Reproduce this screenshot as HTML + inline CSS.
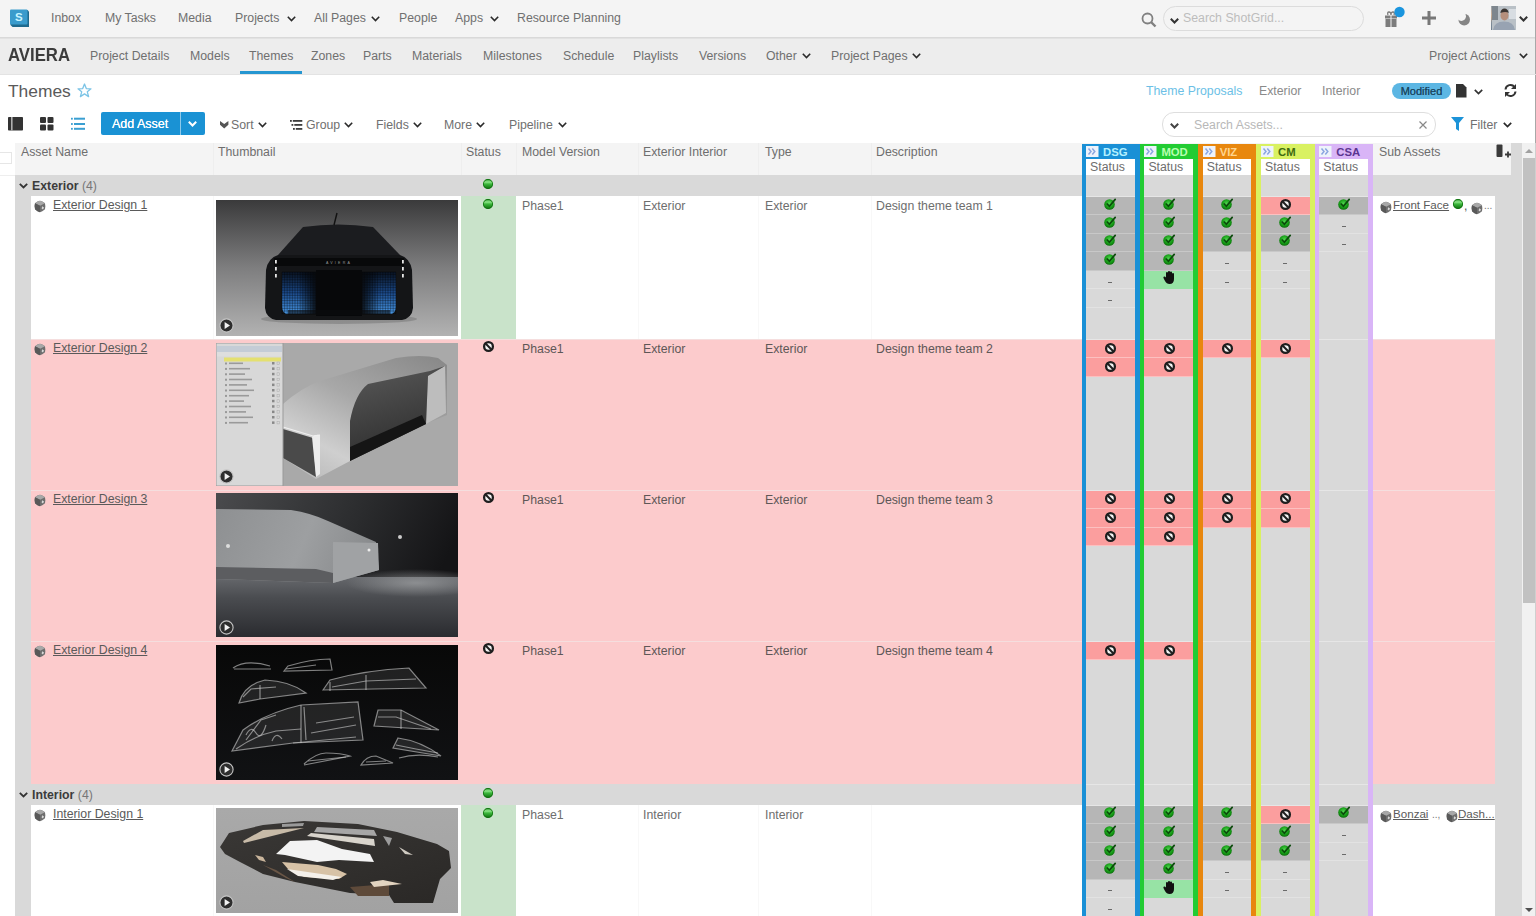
<!DOCTYPE html><html><head><meta charset="utf-8"><style>
*{box-sizing:border-box;margin:0;padding:0}
html,body{width:1536px;height:916px;overflow:hidden;background:#fff;font-family:"Liberation Sans",sans-serif;font-size:12.3px;color:#6e6e6e}
.a{position:absolute}
.t{position:absolute;white-space:nowrap;line-height:14px}
.chev{position:absolute;width:5px;height:5px;border-right:2px solid #2a2a2a;border-bottom:2px solid #2a2a2a;transform:rotate(45deg)}
.u{text-decoration:underline;text-underline-offset:1px}
svg{position:absolute;overflow:visible}
</style></head><body>
<div class="a" style="left:0px;top:0px;width:1536px;height:37px;background:#f4f4f4;"></div>
<div class="a" style="left:0px;top:37px;width:1536px;height:1px;background:#d9d9d9;"></div>
<div class="a" style="left:0px;top:38px;width:1536px;height:1px;background:#e2e2e2;"></div>
<svg style="left:9px;top:8px" width="21" height="20"><path d="M2 2 H18.5 L20 3.5 V19 H3.5 L1.5 17 Z" fill="#1f6a8e"/><rect x="1" y="1.5" width="17.5" height="15" rx="1" fill="#3a9bcc"/><text x="9.8" y="13.2" font-family="Liberation Sans" font-weight="bold" font-size="11.5" fill="#c8f4ff" text-anchor="middle">S</text></svg>
<div class="t" style="left:51px;top:11px;color:#707070;">Inbox</div>
<div class="t" style="left:105px;top:11px;color:#707070;">My Tasks</div>
<div class="t" style="left:178px;top:11px;color:#707070;">Media</div>
<div class="t" style="left:235px;top:11px;color:#707070;">Projects</div>
<div class="t" style="left:314px;top:11px;color:#707070;">All Pages</div>
<div class="t" style="left:399px;top:11px;color:#707070;">People</div>
<div class="t" style="left:455px;top:11px;color:#707070;">Apps</div>
<div class="t" style="left:517px;top:11px;color:#707070;">Resource Planning</div>
<svg style="left:287px;top:15.5px" width="9" height="6"><polyline points="0.8,0.8 4.5,4.5 8.2,0.8" fill="none" stroke="#2a2a2a" stroke-width="1.6"/></svg>
<svg style="left:371px;top:15.5px" width="9" height="6"><polyline points="0.8,0.8 4.5,4.5 8.2,0.8" fill="none" stroke="#2a2a2a" stroke-width="1.6"/></svg>
<svg style="left:490px;top:15.5px" width="9" height="6"><polyline points="0.8,0.8 4.5,4.5 8.2,0.8" fill="none" stroke="#2a2a2a" stroke-width="1.6"/></svg>
<svg style="left:1141px;top:12px" width="17" height="16"><circle cx="6.5" cy="6.5" r="5" fill="none" stroke="#808080" stroke-width="1.8"/><line x1="10" y1="10" x2="14.5" y2="14.5" stroke="#808080" stroke-width="2.4"/></svg>
<div class="a" style="left:1163px;top:6px;width:201px;height:25px;background:transparent;border:1px solid #dcdcdc;border-radius:13px"></div>
<svg style="left:1170px;top:17.5px" width="9" height="6"><polyline points="0.8,0.8 4.5,4.5 8.2,0.8" fill="none" stroke="#333" stroke-width="2"/></svg>
<div class="t" style="left:1183px;top:11px;color:#bdbdbd;">Search ShotGrid...</div>
<svg style="left:1384px;top:5px" width="22" height="22"><rect x="1.5" y="14" width="5" height="8" fill="#7c7c7c"/><rect x="7.5" y="14" width="5" height="8" fill="#7c7c7c"/><rect x="1" y="10.5" width="5.5" height="3" fill="#7c7c7c"/><rect x="7.5" y="10.5" width="5.5" height="3" fill="#7c7c7c"/><path d="M4 10 Q3 7 5 7 Q7 7 7 10 Q7 7 9 7 Q11 7 10 10" fill="none" stroke="#7c7c7c" stroke-width="1.3"/><circle cx="15.5" cy="7" r="5.2" fill="#1b95de"/></svg>
<svg style="left:1422px;top:11px" width="16" height="16"><rect x="5.5" y="0" width="3" height="14" fill="#777"/><rect x="0" y="5.5" width="14" height="3" fill="#777"/></svg>
<svg style="left:1457px;top:12px" width="16" height="16"><defs><mask id="moonm"><rect width="16" height="16" fill="#fff"/><circle cx="4.3" cy="4.2" r="4.7" fill="#000"/></mask></defs><circle cx="7.2" cy="7.6" r="5.8" fill="#858585" mask="url(#moonm)"/></svg>
<div class="a" style="left:1491px;top:6px;width:24px;height:24px;background:linear-gradient(180deg,#9aa3ab 0%,#c7b09a 35%,#b9a08a 50%,#7d8b98 70%,#6f7f8f 100%)"></div>
<svg style="left:1492px;top:6px" width="24" height="24"><rect x="0" y="0" width="24" height="24" fill="#b9c0c6"/><rect x="0" y="0" width="6" height="14" fill="#7d868e"/><rect x="17" y="3" width="7" height="10" fill="#d8dde2"/><ellipse cx="12.5" cy="9.5" rx="4" ry="5" fill="#b58f7c"/><path d="M8.3 7 Q9 2.5 12.5 2.5 Q16 2.5 16.7 7 Q14 5 8.3 7 Z" fill="#3b3532"/><path d="M1 24 Q2 15.5 12 15.5 Q22 15.5 23 24 Z" fill="#98a3b2"/></svg>
<svg style="left:1519px;top:15.5px" width="9" height="6"><polyline points="0.8,0.8 4.5,4.5 8.2,0.8" fill="none" stroke="#333" stroke-width="2"/></svg>
<div class="a" style="left:0px;top:39px;width:1536px;height:36px;background:#ededed;"></div>
<div class="a" style="left:1535px;top:0px;width:1px;height:143px;background:#a8a8a8;"></div>
<div class="a" style="left:0px;top:74px;width:1536px;height:1px;background:#e3e3e3;"></div>
<div class="t" style="left:8px;top:45px;font-size:18px;line-height:20px;font-weight:bold;color:#3c3c3c;transform:scaleX(0.93);transform-origin:0 0">AVIERA</div>
<div class="t" style="left:90px;top:49px;color:#707070;">Project Details</div>
<div class="t" style="left:190px;top:49px;color:#707070;">Models</div>
<div class="t" style="left:249px;top:49px;color:#707070;">Themes</div>
<div class="t" style="left:311px;top:49px;color:#707070;">Zones</div>
<div class="t" style="left:363px;top:49px;color:#707070;">Parts</div>
<div class="t" style="left:412px;top:49px;color:#707070;">Materials</div>
<div class="t" style="left:483px;top:49px;color:#707070;">Milestones</div>
<div class="t" style="left:563px;top:49px;color:#707070;">Schedule</div>
<div class="t" style="left:633px;top:49px;color:#707070;">Playlists</div>
<div class="t" style="left:699px;top:49px;color:#707070;">Versions</div>
<div class="t" style="left:766px;top:49px;color:#707070;">Other</div>
<div class="t" style="left:831px;top:49px;color:#707070;">Project Pages</div>
<div class="t" style="left:1429px;top:49px;color:#707070;">Project Actions</div>
<svg style="left:802px;top:52.5px" width="9" height="6"><polyline points="0.8,0.8 4.5,4.5 8.2,0.8" fill="none" stroke="#2a2a2a" stroke-width="1.6"/></svg>
<svg style="left:912px;top:52.5px" width="9" height="6"><polyline points="0.8,0.8 4.5,4.5 8.2,0.8" fill="none" stroke="#2a2a2a" stroke-width="1.6"/></svg>
<svg style="left:1519px;top:52.5px" width="9" height="6"><polyline points="0.8,0.8 4.5,4.5 8.2,0.8" fill="none" stroke="#2a2a2a" stroke-width="1.6"/></svg>
<div class="a" style="left:240px;top:71px;width:62px;height:3px;background:#2596d1;"></div>
<div class="t" style="left:8px;top:81px;color:#5a5a5a;font-size:17.4px;line-height:20px">Themes</div>
<svg style="left:77px;top:83px" width="15" height="15"><path d="M7.5 1 L9.3 5.6 L14 5.8 L10.3 8.8 L11.6 13.6 L7.5 10.9 L3.4 13.6 L4.7 8.8 L1 5.8 L5.7 5.6 Z" fill="none" stroke="#7cc4e6" stroke-width="1.3" stroke-linejoin="round"/></svg>
<div class="t" style="left:1146px;top:84px;color:#6cbfe6;">Theme Proposals</div>
<div class="t" style="left:1259px;top:84px;color:#8a8a8a;">Exterior</div>
<div class="t" style="left:1322px;top:84px;color:#8a8a8a;">Interior</div>
<div class="a" style="left:1392px;top:83px;width:59px;height:16px;background:#5cb6e3;border-radius:8px;color:#1d4a63;font-size:11px;line-height:16px;text-align:center;text-shadow:0 0 0.4px #1d4a63">Modified</div>
<svg style="left:1456px;top:84px" width="11" height="14"><path d="M0 0 H7 L10.5 3.5 V13.5 H0 Z" fill="#333"/></svg>
<svg style="left:1474px;top:88.5px" width="9" height="6"><polyline points="0.8,0.8 4.5,4.5 8.2,0.8" fill="none" stroke="#333" stroke-width="1.7"/></svg>
<svg style="left:1503px;top:83px" width="15" height="15"><path d="M2.5 6.5 A5 5 0 0 1 11.5 4" fill="none" stroke="#333" stroke-width="2"/><path d="M13 1 V6 H8 Z" fill="#333"/><path d="M12.5 8.5 A5 5 0 0 1 3.5 11" fill="none" stroke="#333" stroke-width="2"/><path d="M2 14 V9 H7 Z" fill="#333"/></svg>
<svg style="left:8px;top:117px" width="16" height="14"><rect x="0" y="0" width="15" height="13.5" rx="0.8" fill="#333"/><rect x="3" y="0" width="1.6" height="13.5" fill="#b0b0b0"/></svg>
<svg style="left:40px;top:117px" width="14" height="14"><rect x="0" y="0" width="6" height="6" rx="1" fill="#333"/><rect x="7.5" y="0" width="6" height="6" rx="1" fill="#333"/><rect x="0" y="7.5" width="6" height="6" rx="1" fill="#333"/><rect x="7.5" y="7.5" width="6" height="6" rx="1" fill="#333"/></svg>
<svg style="left:71px;top:117px" width="15" height="14"><g fill="#3a9fd2"><rect x="0" y="0.8" width="1.8" height="1.8"/><rect x="3" y="0.7" width="11" height="2"/><rect x="0" y="6.1" width="1.8" height="1.8"/><rect x="3" y="6" width="11" height="2"/><rect x="0" y="10.9" width="1.8" height="1.8"/><rect x="3" y="10.8" width="11" height="2"/></g></svg>
<div class="a" style="left:101px;top:112px;width:104px;height:23px;background:#1a92d4;border-radius:2px"></div>
<div class="a" style="left:180px;top:112px;width:1px;height:23px;background:#ffffff80;"></div>
<div class="t" style="left:112px;top:117px;color:#fff;font-size:12.5px;text-shadow:0 0 0.4px #fff">Add Asset</div>
<svg style="left:188px;top:120.5px" width="9" height="6"><polyline points="0.8,0.8 4.5,4.5 8.2,0.8" fill="none" stroke="#fff" stroke-width="2"/></svg>
<svg style="left:219.5px;top:121px" width="9" height="9"><path d="M0 0 L4.2 3 L8.4 0 L8.4 3.8 L4.2 7.6 L0 3.8 Z" fill="#555"/></svg>
<div class="t" style="left:231px;top:118px;color:#707070;">Sort</div>
<svg style="left:258px;top:121.5px" width="9" height="6"><polyline points="0.8,0.8 4.5,4.5 8.2,0.8" fill="none" stroke="#2a2a2a" stroke-width="1.6"/></svg>
<svg style="left:290px;top:120px" width="13" height="11"><g fill="#3c3c3c"><rect x="0" y="0" width="1.8" height="1.8"/><rect x="2.8" y="0" width="9.5" height="1.8"/><rect x="1.5" y="4" width="1.8" height="1.8"/><rect x="4.3" y="4" width="8" height="1.8"/><rect x="3" y="8" width="1.8" height="1.8"/><rect x="5.8" y="8" width="6.5" height="1.8"/></g></svg>
<div class="t" style="left:306px;top:118px;color:#707070;">Group</div>
<svg style="left:344px;top:121.5px" width="9" height="6"><polyline points="0.8,0.8 4.5,4.5 8.2,0.8" fill="none" stroke="#2a2a2a" stroke-width="1.6"/></svg>
<div class="t" style="left:376px;top:118px;color:#707070;">Fields</div>
<svg style="left:413px;top:121.5px" width="9" height="6"><polyline points="0.8,0.8 4.5,4.5 8.2,0.8" fill="none" stroke="#2a2a2a" stroke-width="1.6"/></svg>
<div class="t" style="left:444px;top:118px;color:#707070;">More</div>
<svg style="left:476px;top:121.5px" width="9" height="6"><polyline points="0.8,0.8 4.5,4.5 8.2,0.8" fill="none" stroke="#2a2a2a" stroke-width="1.6"/></svg>
<div class="t" style="left:509px;top:118px;color:#707070;">Pipeline</div>
<svg style="left:558px;top:121.5px" width="9" height="6"><polyline points="0.8,0.8 4.5,4.5 8.2,0.8" fill="none" stroke="#2a2a2a" stroke-width="1.6"/></svg>
<div class="a" style="left:1162px;top:112px;width:274px;height:25px;background:transparent;border:1px solid #dedede;border-radius:12px"></div>
<svg style="left:1170px;top:122.5px" width="9" height="6"><polyline points="0.8,0.8 4.5,4.5 8.2,0.8" fill="none" stroke="#444" stroke-width="2"/></svg>
<div class="t" style="left:1194px;top:118px;color:#b8b8b8;">Search Assets...</div>
<svg style="left:1419px;top:121px" width="8" height="8"><path d="M0.5 0.5 L7.5 7.5 M7.5 0.5 L0.5 7.5" stroke="#888" stroke-width="1.2"/></svg>
<svg style="left:1451px;top:117px" width="13" height="15"><path d="M0 0 H13 L8 6 V14 L5 12 V6 Z" fill="#1c93d8"/></svg>
<div class="t" style="left:1470px;top:118px;color:#707070;">Filter</div>
<svg style="left:1503px;top:121.5px" width="9" height="6"><polyline points="0.8,0.8 4.5,4.5 8.2,0.8" fill="none" stroke="#2a2a2a" stroke-width="1.7"/></svg>
<div class="a" style="left:0px;top:152px;width:12px;height:12px;background:transparent;border:1px solid #e6e6e6;border-left:none"></div>
<div class="a" style="left:0px;top:175px;width:15px;height:1px;background:#eeeeee;"></div>
<div class="a" style="left:15px;top:143px;width:1496px;height:32px;background:#f4f4f4;"></div>
<div class="a" style="left:213px;top:143px;width:1px;height:32px;background:#eeeeee;"></div>
<div class="a" style="left:461px;top:143px;width:1px;height:32px;background:#eeeeee;"></div>
<div class="a" style="left:516px;top:143px;width:1px;height:32px;background:#eeeeee;"></div>
<div class="a" style="left:638px;top:143px;width:1px;height:32px;background:#eeeeee;"></div>
<div class="a" style="left:758px;top:143px;width:1px;height:32px;background:#eeeeee;"></div>
<div class="a" style="left:871px;top:143px;width:1px;height:32px;background:#eeeeee;"></div>
<div class="t" style="left:21px;top:145px;color:#6e6e6e;">Asset Name</div>
<div class="t" style="left:218px;top:145px;color:#6e6e6e;">Thumbnail</div>
<div class="t" style="left:466px;top:145px;color:#6e6e6e;">Status</div>
<div class="t" style="left:522px;top:145px;color:#6e6e6e;">Model Version</div>
<div class="t" style="left:643px;top:145px;color:#6e6e6e;">Exterior Interior</div>
<div class="t" style="left:765px;top:145px;color:#6e6e6e;">Type</div>
<div class="t" style="left:876px;top:145px;color:#6e6e6e;">Description</div>
<div class="t" style="left:1379px;top:145px;color:#6e6e6e;">Sub Assets</div>
<svg style="left:1496px;top:144px" width="16" height="16"><rect x="0.5" y="0.5" width="6" height="12.5" rx="1" fill="#3a3a3a"/><path d="M9 10.5 H15 M12 7.5 V13.5" stroke="#3a3a3a" stroke-width="1.8"/></svg>
<div class="a" style="left:1511px;top:143px;width:11px;height:773px;background:#d9d9d9;"></div>
<div class="a" style="left:1495px;top:175px;width:16px;height:741px;background:#d9d9d9;"></div>
<div class="a" style="left:1522px;top:143px;width:14px;height:773px;background:#f1f1f1;"></div>
<div class="a" style="left:1523px;top:158px;width:12px;height:445px;background:#c1c1c1;"></div>
<div class="a" style="left:1535px;top:143px;width:1px;height:773px;background:#cfcfcf;"></div>
<svg style="left:1524px;top:147px" width="10" height="8"><path d="M1 6 L5 2 L9 6 Z" fill="#a0a0a0"/></svg>
<svg style="left:1524px;top:906px" width="10" height="8"><path d="M1 2 L5 6 L9 2 Z" fill="#505050"/></svg>
<div class="a" style="left:15px;top:175px;width:16px;height:741px;background:#d9d9d9;"></div>
<div class="a" style="left:15px;top:175px;width:1067px;height:21px;background:#d9d9d9;"></div>
<svg style="left:19px;top:182.5px" width="9" height="6"><polyline points="0.8,0.8 4.5,4.5 8.2,0.8" fill="none" stroke="#333" stroke-width="1.8"/></svg>
<div class="t" style="left:32px;top:179px;color:#3c3c3c"><b>Exterior</b> <span style="color:#777">(4)</span></div>
<svg style="left:482px;top:178px" width="12" height="12"><defs><linearGradient id="gd" x1="0" y1="0" x2="0" y2="1"><stop offset="0" stop-color="#1f8a1f"/><stop offset="0.3" stop-color="#8fe68a"/><stop offset="0.5" stop-color="#3cb83c"/><stop offset="1" stop-color="#0b6a0b"/></linearGradient></defs><circle cx="6" cy="6" r="5" fill="url(#gd)"/><circle cx="6" cy="6" r="4.6" fill="none" stroke="#0e6e0e" stroke-width="0.8"/></svg>
<div class="a" style="left:1373px;top:175px;width:138px;height:21px;background:#d9d9d9;"></div>
<div class="a" style="left:15px;top:784px;width:1067px;height:21px;background:#d9d9d9;"></div>
<svg style="left:19px;top:791.5px" width="9" height="6"><polyline points="0.8,0.8 4.5,4.5 8.2,0.8" fill="none" stroke="#333" stroke-width="1.8"/></svg>
<div class="t" style="left:32px;top:788px;color:#3c3c3c"><b>Interior</b> <span style="color:#777">(4)</span></div>
<svg style="left:482px;top:787px" width="12" height="12"><defs><linearGradient id="gd" x1="0" y1="0" x2="0" y2="1"><stop offset="0" stop-color="#1f8a1f"/><stop offset="0.3" stop-color="#8fe68a"/><stop offset="0.5" stop-color="#3cb83c"/><stop offset="1" stop-color="#0b6a0b"/></linearGradient></defs><circle cx="6" cy="6" r="5" fill="url(#gd)"/><circle cx="6" cy="6" r="4.6" fill="none" stroke="#0e6e0e" stroke-width="0.8"/></svg>
<div class="a" style="left:1373px;top:784px;width:138px;height:21px;background:#d9d9d9;"></div>
<div class="a" style="left:31px;top:196px;width:1051px;height:143px;background:#ffffff;"></div>
<div class="a" style="left:1373px;top:196px;width:122px;height:143px;background:#ffffff;"></div>
<div class="a" style="left:213px;top:196px;width:1px;height:143px;background:#f8f8f8;"></div>
<div class="a" style="left:638px;top:196px;width:1px;height:143px;background:#f8f8f8;"></div>
<div class="a" style="left:758px;top:196px;width:1px;height:143px;background:#f8f8f8;"></div>
<div class="a" style="left:871px;top:196px;width:1px;height:143px;background:#f8f8f8;"></div>
<svg style="left:34px;top:200px" width="12" height="13"><path d="M6 0.8 Q8 1 11 3.2 Q11.8 6.5 11 9.3 Q8 11.8 6 12.2 Q3.5 11.8 1 9.3 Q0.2 6.5 1 3.2 Q3.5 1 6 0.8 Z" fill="#6e6e6e"/><path d="M6 0.8 Q8 1 11 3.2 L6 5.8 L1 3.2 Q3.5 1 6 0.8 Z" fill="#a8a8a8"/><path d="M6 5.8 L1 3.2 Q0.2 6.5 1 9.3 Q3.5 11.8 6 12.2 Z" fill="#595959"/><path d="M8.2 6.3 L10 7.5 L9 9.5 L7.6 8.6 Z" fill="#d9d9d9"/></svg>
<div class="t u" style="left:53px;top:198px;color:#5a5a5a">Exterior Design 1</div>
<div class="a" style="left:461px;top:196px;width:55px;height:143px;background:#c9e3ca;"></div>
<svg style="left:482px;top:198px" width="12" height="12"><defs><linearGradient id="gd" x1="0" y1="0" x2="0" y2="1"><stop offset="0" stop-color="#1f8a1f"/><stop offset="0.3" stop-color="#8fe68a"/><stop offset="0.5" stop-color="#3cb83c"/><stop offset="1" stop-color="#0b6a0b"/></linearGradient></defs><circle cx="6" cy="6" r="5" fill="url(#gd)"/><circle cx="6" cy="6" r="4.6" fill="none" stroke="#0e6e0e" stroke-width="0.8"/></svg>
<div class="t" style="left:522px;top:198.5px;color:#6e6e6e;">Phase1</div>
<div class="t" style="left:643px;top:198.5px;color:#6e6e6e;">Exterior</div>
<div class="t" style="left:765px;top:198.5px;color:#6e6e6e;">Exterior</div>
<div class="t" style="left:876px;top:198.5px;color:#6e6e6e;">Design theme team 1</div>
<div class="a" style="left:31px;top:339px;width:1051px;height:151px;background:#fccbcc;"></div>
<div class="a" style="left:1373px;top:339px;width:122px;height:151px;background:#fccbcc;"></div>
<div class="a" style="left:31px;top:339px;width:1051px;height:1px;background:#f5dede;"></div>
<div class="a" style="left:1373px;top:339px;width:122px;height:1px;background:#f5dede;"></div>
<svg style="left:34px;top:343px" width="12" height="13"><path d="M6 0.8 Q8 1 11 3.2 Q11.8 6.5 11 9.3 Q8 11.8 6 12.2 Q3.5 11.8 1 9.3 Q0.2 6.5 1 3.2 Q3.5 1 6 0.8 Z" fill="#6e6e6e"/><path d="M6 0.8 Q8 1 11 3.2 L6 5.8 L1 3.2 Q3.5 1 6 0.8 Z" fill="#a8a8a8"/><path d="M6 5.8 L1 3.2 Q0.2 6.5 1 9.3 Q3.5 11.8 6 12.2 Z" fill="#595959"/><path d="M8.2 6.3 L10 7.5 L9 9.5 L7.6 8.6 Z" fill="#d9d9d9"/></svg>
<div class="t u" style="left:53px;top:341px;color:#5a5a5a">Exterior Design 2</div>
<svg style="left:481.5px;top:339.5px" width="13.0" height="13.0"><circle cx="6.5" cy="6.5" r="4.4" fill="#f4f4f4" stroke="#1e1e1e" stroke-width="2.3"/><line x1="3.3" y1="3.3" x2="9.7" y2="9.7" stroke="#1e1e1e" stroke-width="2"/></svg>
<div class="t" style="left:522px;top:341.5px;color:#5e5757;">Phase1</div>
<div class="t" style="left:643px;top:341.5px;color:#5e5757;">Exterior</div>
<div class="t" style="left:765px;top:341.5px;color:#5e5757;">Exterior</div>
<div class="t" style="left:876px;top:341.5px;color:#5e5757;">Design theme team 2</div>
<div class="a" style="left:31px;top:490px;width:1051px;height:151px;background:#fccbcc;"></div>
<div class="a" style="left:1373px;top:490px;width:122px;height:151px;background:#fccbcc;"></div>
<div class="a" style="left:31px;top:490px;width:1051px;height:1px;background:#f5dede;"></div>
<div class="a" style="left:1373px;top:490px;width:122px;height:1px;background:#f5dede;"></div>
<svg style="left:34px;top:494px" width="12" height="13"><path d="M6 0.8 Q8 1 11 3.2 Q11.8 6.5 11 9.3 Q8 11.8 6 12.2 Q3.5 11.8 1 9.3 Q0.2 6.5 1 3.2 Q3.5 1 6 0.8 Z" fill="#6e6e6e"/><path d="M6 0.8 Q8 1 11 3.2 L6 5.8 L1 3.2 Q3.5 1 6 0.8 Z" fill="#a8a8a8"/><path d="M6 5.8 L1 3.2 Q0.2 6.5 1 9.3 Q3.5 11.8 6 12.2 Z" fill="#595959"/><path d="M8.2 6.3 L10 7.5 L9 9.5 L7.6 8.6 Z" fill="#d9d9d9"/></svg>
<div class="t u" style="left:53px;top:492px;color:#5a5a5a">Exterior Design 3</div>
<svg style="left:481.5px;top:490.5px" width="13.0" height="13.0"><circle cx="6.5" cy="6.5" r="4.4" fill="#f4f4f4" stroke="#1e1e1e" stroke-width="2.3"/><line x1="3.3" y1="3.3" x2="9.7" y2="9.7" stroke="#1e1e1e" stroke-width="2"/></svg>
<div class="t" style="left:522px;top:492.5px;color:#5e5757;">Phase1</div>
<div class="t" style="left:643px;top:492.5px;color:#5e5757;">Exterior</div>
<div class="t" style="left:765px;top:492.5px;color:#5e5757;">Exterior</div>
<div class="t" style="left:876px;top:492.5px;color:#5e5757;">Design theme team 3</div>
<div class="a" style="left:31px;top:641px;width:1051px;height:143px;background:#fccbcc;"></div>
<div class="a" style="left:1373px;top:641px;width:122px;height:143px;background:#fccbcc;"></div>
<div class="a" style="left:31px;top:641px;width:1051px;height:1px;background:#f5dede;"></div>
<div class="a" style="left:1373px;top:641px;width:122px;height:1px;background:#f5dede;"></div>
<svg style="left:34px;top:645px" width="12" height="13"><path d="M6 0.8 Q8 1 11 3.2 Q11.8 6.5 11 9.3 Q8 11.8 6 12.2 Q3.5 11.8 1 9.3 Q0.2 6.5 1 3.2 Q3.5 1 6 0.8 Z" fill="#6e6e6e"/><path d="M6 0.8 Q8 1 11 3.2 L6 5.8 L1 3.2 Q3.5 1 6 0.8 Z" fill="#a8a8a8"/><path d="M6 5.8 L1 3.2 Q0.2 6.5 1 9.3 Q3.5 11.8 6 12.2 Z" fill="#595959"/><path d="M8.2 6.3 L10 7.5 L9 9.5 L7.6 8.6 Z" fill="#d9d9d9"/></svg>
<div class="t u" style="left:53px;top:643px;color:#5a5a5a">Exterior Design 4</div>
<svg style="left:481.5px;top:641.5px" width="13.0" height="13.0"><circle cx="6.5" cy="6.5" r="4.4" fill="#f4f4f4" stroke="#1e1e1e" stroke-width="2.3"/><line x1="3.3" y1="3.3" x2="9.7" y2="9.7" stroke="#1e1e1e" stroke-width="2"/></svg>
<div class="t" style="left:522px;top:643.5px;color:#5e5757;">Phase1</div>
<div class="t" style="left:643px;top:643.5px;color:#5e5757;">Exterior</div>
<div class="t" style="left:765px;top:643.5px;color:#5e5757;">Exterior</div>
<div class="t" style="left:876px;top:643.5px;color:#5e5757;">Design theme team 4</div>
<div class="a" style="left:31px;top:805px;width:1051px;height:111px;background:#ffffff;"></div>
<div class="a" style="left:1373px;top:805px;width:122px;height:111px;background:#ffffff;"></div>
<div class="a" style="left:213px;top:805px;width:1px;height:111px;background:#f8f8f8;"></div>
<div class="a" style="left:638px;top:805px;width:1px;height:111px;background:#f8f8f8;"></div>
<div class="a" style="left:758px;top:805px;width:1px;height:111px;background:#f8f8f8;"></div>
<div class="a" style="left:871px;top:805px;width:1px;height:111px;background:#f8f8f8;"></div>
<svg style="left:34px;top:809px" width="12" height="13"><path d="M6 0.8 Q8 1 11 3.2 Q11.8 6.5 11 9.3 Q8 11.8 6 12.2 Q3.5 11.8 1 9.3 Q0.2 6.5 1 3.2 Q3.5 1 6 0.8 Z" fill="#6e6e6e"/><path d="M6 0.8 Q8 1 11 3.2 L6 5.8 L1 3.2 Q3.5 1 6 0.8 Z" fill="#a8a8a8"/><path d="M6 5.8 L1 3.2 Q0.2 6.5 1 9.3 Q3.5 11.8 6 12.2 Z" fill="#595959"/><path d="M8.2 6.3 L10 7.5 L9 9.5 L7.6 8.6 Z" fill="#d9d9d9"/></svg>
<div class="t u" style="left:53px;top:807px;color:#5a5a5a">Interior Design 1</div>
<div class="a" style="left:461px;top:805px;width:55px;height:111px;background:#c9e3ca;"></div>
<svg style="left:482px;top:807px" width="12" height="12"><defs><linearGradient id="gd" x1="0" y1="0" x2="0" y2="1"><stop offset="0" stop-color="#1f8a1f"/><stop offset="0.3" stop-color="#8fe68a"/><stop offset="0.5" stop-color="#3cb83c"/><stop offset="1" stop-color="#0b6a0b"/></linearGradient></defs><circle cx="6" cy="6" r="5" fill="url(#gd)"/><circle cx="6" cy="6" r="4.6" fill="none" stroke="#0e6e0e" stroke-width="0.8"/></svg>
<div class="t" style="left:522px;top:807.5px;color:#6e6e6e;">Phase1</div>
<div class="t" style="left:643px;top:807.5px;color:#6e6e6e;">Interior</div>
<div class="t" style="left:765px;top:807.5px;color:#6e6e6e;">Interior</div>
<svg style="left:216px;top:200px;overflow:hidden" width="242" height="136" viewBox="0 0 242 136"><defs>
<linearGradient id="t1bg" x1="0" y1="0" x2="0" y2="1"><stop offset="0" stop-color="#3a3a3b"/><stop offset="0.5" stop-color="#7e7e7f"/><stop offset="1" stop-color="#b2b2b2"/></linearGradient>
<linearGradient id="blueV" x1="0" y1="0" x2="0" y2="1"><stop offset="0" stop-color="#0a1322"/><stop offset="0.5" stop-color="#1c4c8e"/><stop offset="1" stop-color="#4a9ae8"/></linearGradient>
<linearGradient id="fadeL" x1="0" y1="0" x2="1" y2="0"><stop offset="0" stop-color="#000" stop-opacity="0"/><stop offset="1" stop-color="#07080a" stop-opacity="0.9"/></linearGradient>
<linearGradient id="fadeR" x1="1" y1="0" x2="0" y2="0"><stop offset="0" stop-color="#000" stop-opacity="0"/><stop offset="1" stop-color="#07080a" stop-opacity="0.9"/></linearGradient>
</defs>
<rect width="242" height="136" fill="url(#t1bg)"/>
<ellipse cx="123" cy="119" rx="78" ry="5" fill="#2a2a2a" opacity="0.2"/>
<path d="M87 27 Q122 22 157 27 L184 55 L62 55 Z" fill="#1b1c1f"/>
<path d="M62 55 L184 55 Q194 58 196 70 L197 108 Q196 118 186 120 L60 120 Q50 118 49 108 L50 70 Q52 58 62 55 Z" fill="#141517"/>
<rect x="58" y="58" width="130" height="8" fill="#08090a"/>
<path d="M66 72 L100 72 L100 114 L70 114 Q66 112 66 106 Z" fill="url(#blueV)"/>
<path d="M180 72 L146 72 L146 114 L176 114 Q180 112 180 106 Z" fill="url(#blueV)"/>
<line x1="66.0" y1="72" x2="66.0" y2="114" stroke="#000" stroke-opacity="0.45" stroke-width="0.7"/><line x1="68.6" y1="72" x2="68.6" y2="114" stroke="#000" stroke-opacity="0.45" stroke-width="0.7"/><line x1="71.2" y1="72" x2="71.2" y2="114" stroke="#000" stroke-opacity="0.45" stroke-width="0.7"/><line x1="73.8" y1="72" x2="73.8" y2="114" stroke="#000" stroke-opacity="0.45" stroke-width="0.7"/><line x1="76.4" y1="72" x2="76.4" y2="114" stroke="#000" stroke-opacity="0.45" stroke-width="0.7"/><line x1="79.0" y1="72" x2="79.0" y2="114" stroke="#000" stroke-opacity="0.45" stroke-width="0.7"/><line x1="81.6" y1="72" x2="81.6" y2="114" stroke="#000" stroke-opacity="0.45" stroke-width="0.7"/><line x1="84.2" y1="72" x2="84.2" y2="114" stroke="#000" stroke-opacity="0.45" stroke-width="0.7"/><line x1="86.8" y1="72" x2="86.8" y2="114" stroke="#000" stroke-opacity="0.45" stroke-width="0.7"/><line x1="89.4" y1="72" x2="89.4" y2="114" stroke="#000" stroke-opacity="0.45" stroke-width="0.7"/><line x1="92.0" y1="72" x2="92.0" y2="114" stroke="#000" stroke-opacity="0.45" stroke-width="0.7"/><line x1="94.6" y1="72" x2="94.6" y2="114" stroke="#000" stroke-opacity="0.45" stroke-width="0.7"/><line x1="97.2" y1="72" x2="97.2" y2="114" stroke="#000" stroke-opacity="0.45" stroke-width="0.7"/><line x1="99.8" y1="72" x2="99.8" y2="114" stroke="#000" stroke-opacity="0.45" stroke-width="0.7"/><line x1="66" y1="72.0" x2="100" y2="72.0" stroke="#000" stroke-opacity="0.45" stroke-width="0.7"/><line x1="66" y1="74.6" x2="100" y2="74.6" stroke="#000" stroke-opacity="0.45" stroke-width="0.7"/><line x1="66" y1="77.2" x2="100" y2="77.2" stroke="#000" stroke-opacity="0.45" stroke-width="0.7"/><line x1="66" y1="79.8" x2="100" y2="79.8" stroke="#000" stroke-opacity="0.45" stroke-width="0.7"/><line x1="66" y1="82.4" x2="100" y2="82.4" stroke="#000" stroke-opacity="0.45" stroke-width="0.7"/><line x1="66" y1="85.0" x2="100" y2="85.0" stroke="#000" stroke-opacity="0.45" stroke-width="0.7"/><line x1="66" y1="87.6" x2="100" y2="87.6" stroke="#000" stroke-opacity="0.45" stroke-width="0.7"/><line x1="66" y1="90.2" x2="100" y2="90.2" stroke="#000" stroke-opacity="0.45" stroke-width="0.7"/><line x1="66" y1="92.8" x2="100" y2="92.8" stroke="#000" stroke-opacity="0.45" stroke-width="0.7"/><line x1="66" y1="95.4" x2="100" y2="95.4" stroke="#000" stroke-opacity="0.45" stroke-width="0.7"/><line x1="66" y1="98.0" x2="100" y2="98.0" stroke="#000" stroke-opacity="0.45" stroke-width="0.7"/><line x1="66" y1="100.6" x2="100" y2="100.6" stroke="#000" stroke-opacity="0.45" stroke-width="0.7"/><line x1="66" y1="103.2" x2="100" y2="103.2" stroke="#000" stroke-opacity="0.45" stroke-width="0.7"/><line x1="66" y1="105.8" x2="100" y2="105.8" stroke="#000" stroke-opacity="0.45" stroke-width="0.7"/><line x1="66" y1="108.4" x2="100" y2="108.4" stroke="#000" stroke-opacity="0.45" stroke-width="0.7"/><line x1="66" y1="111.0" x2="100" y2="111.0" stroke="#000" stroke-opacity="0.45" stroke-width="0.7"/><line x1="66" y1="113.6" x2="100" y2="113.6" stroke="#000" stroke-opacity="0.45" stroke-width="0.7"/><line x1="146.0" y1="72" x2="146.0" y2="114" stroke="#000" stroke-opacity="0.45" stroke-width="0.7"/><line x1="148.6" y1="72" x2="148.6" y2="114" stroke="#000" stroke-opacity="0.45" stroke-width="0.7"/><line x1="151.2" y1="72" x2="151.2" y2="114" stroke="#000" stroke-opacity="0.45" stroke-width="0.7"/><line x1="153.8" y1="72" x2="153.8" y2="114" stroke="#000" stroke-opacity="0.45" stroke-width="0.7"/><line x1="156.4" y1="72" x2="156.4" y2="114" stroke="#000" stroke-opacity="0.45" stroke-width="0.7"/><line x1="159.0" y1="72" x2="159.0" y2="114" stroke="#000" stroke-opacity="0.45" stroke-width="0.7"/><line x1="161.6" y1="72" x2="161.6" y2="114" stroke="#000" stroke-opacity="0.45" stroke-width="0.7"/><line x1="164.2" y1="72" x2="164.2" y2="114" stroke="#000" stroke-opacity="0.45" stroke-width="0.7"/><line x1="166.8" y1="72" x2="166.8" y2="114" stroke="#000" stroke-opacity="0.45" stroke-width="0.7"/><line x1="169.4" y1="72" x2="169.4" y2="114" stroke="#000" stroke-opacity="0.45" stroke-width="0.7"/><line x1="172.0" y1="72" x2="172.0" y2="114" stroke="#000" stroke-opacity="0.45" stroke-width="0.7"/><line x1="174.6" y1="72" x2="174.6" y2="114" stroke="#000" stroke-opacity="0.45" stroke-width="0.7"/><line x1="177.2" y1="72" x2="177.2" y2="114" stroke="#000" stroke-opacity="0.45" stroke-width="0.7"/><line x1="179.8" y1="72" x2="179.8" y2="114" stroke="#000" stroke-opacity="0.45" stroke-width="0.7"/><line x1="146" y1="72.0" x2="180" y2="72.0" stroke="#000" stroke-opacity="0.45" stroke-width="0.7"/><line x1="146" y1="74.6" x2="180" y2="74.6" stroke="#000" stroke-opacity="0.45" stroke-width="0.7"/><line x1="146" y1="77.2" x2="180" y2="77.2" stroke="#000" stroke-opacity="0.45" stroke-width="0.7"/><line x1="146" y1="79.8" x2="180" y2="79.8" stroke="#000" stroke-opacity="0.45" stroke-width="0.7"/><line x1="146" y1="82.4" x2="180" y2="82.4" stroke="#000" stroke-opacity="0.45" stroke-width="0.7"/><line x1="146" y1="85.0" x2="180" y2="85.0" stroke="#000" stroke-opacity="0.45" stroke-width="0.7"/><line x1="146" y1="87.6" x2="180" y2="87.6" stroke="#000" stroke-opacity="0.45" stroke-width="0.7"/><line x1="146" y1="90.2" x2="180" y2="90.2" stroke="#000" stroke-opacity="0.45" stroke-width="0.7"/><line x1="146" y1="92.8" x2="180" y2="92.8" stroke="#000" stroke-opacity="0.45" stroke-width="0.7"/><line x1="146" y1="95.4" x2="180" y2="95.4" stroke="#000" stroke-opacity="0.45" stroke-width="0.7"/><line x1="146" y1="98.0" x2="180" y2="98.0" stroke="#000" stroke-opacity="0.45" stroke-width="0.7"/><line x1="146" y1="100.6" x2="180" y2="100.6" stroke="#000" stroke-opacity="0.45" stroke-width="0.7"/><line x1="146" y1="103.2" x2="180" y2="103.2" stroke="#000" stroke-opacity="0.45" stroke-width="0.7"/><line x1="146" y1="105.8" x2="180" y2="105.8" stroke="#000" stroke-opacity="0.45" stroke-width="0.7"/><line x1="146" y1="108.4" x2="180" y2="108.4" stroke="#000" stroke-opacity="0.45" stroke-width="0.7"/><line x1="146" y1="111.0" x2="180" y2="111.0" stroke="#000" stroke-opacity="0.45" stroke-width="0.7"/><line x1="146" y1="113.6" x2="180" y2="113.6" stroke="#000" stroke-opacity="0.45" stroke-width="0.7"/>
<rect x="82" y="72" width="18" height="42" fill="url(#fadeL)"/>
<rect x="146" y="72" width="18" height="42" fill="url(#fadeR)"/>
<rect x="100" y="70" width="46" height="46" fill="#07080a"/>
<rect x="72" y="110" width="102" height="5" fill="#0b0c0e" opacity="0.6"/>
<rect x="59" y="60" width="1.8" height="3.5" fill="#e8e8e8"/><rect x="59" y="67" width="1.8" height="3.5" fill="#e8e8e8"/><rect x="59" y="74" width="1.8" height="3.5" fill="#e8e8e8"/>
<rect x="186" y="60" width="1.8" height="3.5" fill="#e8e8e8"/><rect x="186" y="67" width="1.8" height="3.5" fill="#e8e8e8"/><rect x="186" y="74" width="1.8" height="3.5" fill="#e8e8e8"/>
<text x="123" y="64" font-size="3.6" fill="#9a9a9a" text-anchor="middle" letter-spacing="2.2" font-family="Liberation Sans">AVIERA</text>
<path d="M118 25 L121 13" stroke="#111" stroke-width="1.4"/></svg>
<svg style="left:216px;top:343px;overflow:hidden" width="242" height="143" viewBox="0 0 242 143"><defs>
<linearGradient id="t2car" x1="0.9" y1="0" x2="0.2" y2="1"><stop offset="0" stop-color="#8a8a8a"/><stop offset="0.45" stop-color="#a8a8a8"/><stop offset="0.8" stop-color="#cfcfcf"/><stop offset="1" stop-color="#bdbdbd"/></linearGradient>
<linearGradient id="t2win" x1="0" y1="0" x2="0.3" y2="1"><stop offset="0" stop-color="#5a5a5a"/><stop offset="1" stop-color="#2e2e2e"/></linearGradient>
</defs>
<rect width="242" height="143" fill="#a9a9a9"/>
<path d="M67 61 Q85 45 104 38 L180 15 Q205 11 222 15 L231 22 L231 72 L200 85 L134 118 L100 136 L67 115 Z" fill="url(#t2car)"/>
<path d="M212 32 L229 23 L230 70 L210 81 Z" fill="#bdbdbd"/>
<path d="M134 78 Q139 51 152 41 L214 28 L229 23 L212 33 L210 81 L134 118 Z" fill="url(#t2win)"/>
<path d="M134 104 L206 72 L210 81 L134 118 Z" fill="#151515"/>
<path d="M67 86 L97 95 L100 134 L67 115 Z" fill="#4a4a4a"/>
<path d="M96 94 Q99 91 104 92 L104 131 L100 134 Z" fill="#ececec"/>
<path d="M67 84 L97 93 L104 92" fill="none" stroke="#f0f0f0" stroke-width="1.2"/>
<rect x="0" y="0" width="67" height="143" fill="#d8d8d8"/>
<rect x="0" y="0" width="67" height="143" fill="none" stroke="#9a9a9a" stroke-width="1"/>
<rect x="1" y="3" width="65" height="6" fill="#c4ccd6"/>
<rect x="1" y="9" width="65" height="4.5" fill="#dedede"/>
<rect x="8" y="14.5" width="57" height="4" fill="#e4e070"/>
<rect x="9" y="19.5" width="2" height="2" fill="#999"/><rect x="13" y="19.5" width="14" height="1.6" fill="#9a9a9a"/><rect x="56" y="19.0" width="2.5" height="2.5" fill="#888"/><rect x="61" y="19.0" width="2.5" height="2.5" fill="none" stroke="#aaa" stroke-width="0.5"/><rect x="9" y="24.9" width="2" height="2" fill="#999"/><rect x="13" y="24.9" width="21" height="1.6" fill="#9a9a9a"/><rect x="56" y="24.4" width="2.5" height="2.5" fill="#888"/><rect x="61" y="24.4" width="2.5" height="2.5" fill="none" stroke="#aaa" stroke-width="0.5"/><rect x="9" y="30.3" width="2" height="2" fill="#999"/><rect x="13" y="30.3" width="16" height="1.6" fill="#9a9a9a"/><rect x="56" y="29.8" width="2.5" height="2.5" fill="#888"/><rect x="61" y="29.8" width="2.5" height="2.5" fill="none" stroke="#aaa" stroke-width="0.5"/><rect x="9" y="35.7" width="2" height="2" fill="#999"/><rect x="13" y="35.7" width="23" height="1.6" fill="#9a9a9a"/><rect x="56" y="35.2" width="2.5" height="2.5" fill="#888"/><rect x="61" y="35.2" width="2.5" height="2.5" fill="none" stroke="#aaa" stroke-width="0.5"/><rect x="9" y="41.1" width="2" height="2" fill="#999"/><rect x="13" y="41.1" width="18" height="1.6" fill="#9a9a9a"/><rect x="56" y="40.6" width="2.5" height="2.5" fill="#888"/><rect x="61" y="40.6" width="2.5" height="2.5" fill="none" stroke="#aaa" stroke-width="0.5"/><rect x="9" y="46.5" width="2" height="2" fill="#999"/><rect x="13" y="46.5" width="25" height="1.6" fill="#9a9a9a"/><rect x="56" y="46.0" width="2.5" height="2.5" fill="#888"/><rect x="61" y="46.0" width="2.5" height="2.5" fill="none" stroke="#aaa" stroke-width="0.5"/><rect x="9" y="51.9" width="2" height="2" fill="#999"/><rect x="13" y="51.9" width="20" height="1.6" fill="#9a9a9a"/><rect x="56" y="51.4" width="2.5" height="2.5" fill="#888"/><rect x="61" y="51.4" width="2.5" height="2.5" fill="none" stroke="#aaa" stroke-width="0.5"/><rect x="9" y="57.3" width="2" height="2" fill="#999"/><rect x="13" y="57.3" width="15" height="1.6" fill="#9a9a9a"/><rect x="56" y="56.8" width="2.5" height="2.5" fill="#888"/><rect x="61" y="56.8" width="2.5" height="2.5" fill="none" stroke="#aaa" stroke-width="0.5"/><rect x="9" y="62.7" width="2" height="2" fill="#999"/><rect x="13" y="62.7" width="22" height="1.6" fill="#9a9a9a"/><rect x="56" y="62.2" width="2.5" height="2.5" fill="#888"/><rect x="61" y="62.2" width="2.5" height="2.5" fill="none" stroke="#aaa" stroke-width="0.5"/><rect x="9" y="68.1" width="2" height="2" fill="#999"/><rect x="13" y="68.1" width="17" height="1.6" fill="#9a9a9a"/><rect x="56" y="67.6" width="2.5" height="2.5" fill="#888"/><rect x="61" y="67.6" width="2.5" height="2.5" fill="none" stroke="#aaa" stroke-width="0.5"/><rect x="9" y="73.5" width="2" height="2" fill="#999"/><rect x="13" y="73.5" width="24" height="1.6" fill="#9a9a9a"/><rect x="56" y="73.0" width="2.5" height="2.5" fill="#888"/><rect x="61" y="73.0" width="2.5" height="2.5" fill="none" stroke="#aaa" stroke-width="0.5"/><rect x="9" y="78.9" width="2" height="2" fill="#999"/><rect x="13" y="78.9" width="19" height="1.6" fill="#9a9a9a"/><rect x="56" y="78.4" width="2.5" height="2.5" fill="#888"/><rect x="61" y="78.4" width="2.5" height="2.5" fill="none" stroke="#aaa" stroke-width="0.5"/></svg>
<svg style="left:216px;top:493px;overflow:hidden" width="242" height="144" viewBox="0 0 242 144"><defs>
<linearGradient id="t3bg" x1="0" y1="0" x2="1" y2="0.3"><stop offset="0" stop-color="#4a4b4d"/><stop offset="0.6" stop-color="#2a2b2d"/><stop offset="1" stop-color="#141416"/></linearGradient>
<linearGradient id="t3car" x1="0" y1="0" x2="1" y2="0.2"><stop offset="0" stop-color="#8e9092"/><stop offset="0.6" stop-color="#9d9fa1"/><stop offset="1" stop-color="#8a8c8e"/></linearGradient>
<linearGradient id="t3gr" x1="0" y1="0" x2="0" y2="1"><stop offset="0" stop-color="#66686c"/><stop offset="0.35" stop-color="#4a4c50"/><stop offset="1" stop-color="#2a2b2f"/></linearGradient>
<radialGradient id="t3haze" cx="50%" cy="50%" r="50%"><stop offset="0" stop-color="#a0a2a4" stop-opacity="0.7"/><stop offset="1" stop-color="#a0a2a4" stop-opacity="0"/></radialGradient>
</defs>
<rect width="242" height="144" fill="url(#t3bg)"/><rect width="242" height="144" fill="url(#t3bg)" opacity="0"/>
<rect y="84" width="242" height="60" fill="url(#t3gr)"/>
<ellipse cx="200" cy="90" rx="70" ry="14" fill="url(#t3haze)"/>
<path d="M0 16 L75 17 Q95 20 112 28 L160 49 L163 77 L117 90 L0 86 Z" fill="url(#t3car)"/>
<path d="M117 49 L162 50 L163 77 L117 90 Z" fill="#a0a2a4"/>
<path d="M0 74 L100 76 L117 80 L117 90 L0 86 Z" fill="#5c5d60"/>
<circle cx="12" cy="53" r="2" fill="#ddd"/><circle cx="153" cy="57" r="1.5" fill="#eee"/><circle cx="184" cy="44" r="2" fill="#ccc"/></svg>
<svg style="left:216px;top:645px;overflow:hidden" width="242" height="135" viewBox="0 0 242 135"><defs><linearGradient id="t4bg" x1="0" y1="0" x2="0" y2="1"><stop offset="0" stop-color="#080808"/><stop offset="1" stop-color="#111214"/></linearGradient><filter id="t4blur" x="-5%" y="-5%" width="110%" height="110%"><feGaussianBlur stdDeviation="0.45"/></filter></defs><rect width="242" height="135" fill="url(#t4bg)"/><g fill="#9a9a9a" opacity="0.16"><path d="M16 106 L27 85 Q50 68 85 60 L142 57 L147 95 L77 98 Z"/><path d="M107 45 L114 35 Q150 25 193 23 L210 43 Z"/><path d="M23 58 Q28 40 49 35 Q74 36 90 48 L44 54 Z"/><path d="M158 81 L162 65 H185 L223 85 Z"/><path d="M177 103 L182 93 Q205 96 225 111 Z"/></g><g filter="url(#t4blur)"><path d="M17 23 Q30 14 54 21" fill="none" stroke="#cfcfcf" stroke-opacity="0.6" stroke-width="1.2"/><path d="M18 24 H55" fill="none" stroke="#cfcfcf" stroke-opacity="0.6" stroke-width="1.2"/><path d="M68 26 L72 21 Q95 14 114 14 L116 25 Z" fill="none" stroke="#cfcfcf" stroke-opacity="0.6" stroke-width="1.2"/><path d="M107 45 L114 35 Q150 25 193 23 L210 43 Z" fill="none" stroke="#cfcfcf" stroke-opacity="0.6" stroke-width="1.2"/><path d="M114 37 V46 M150 30 V45" fill="none" stroke="#cfcfcf" stroke-opacity="0.6" stroke-width="1.2"/><path d="M23 58 Q28 40 49 35 Q74 36 90 48 L44 54 Z" fill="none" stroke="#cfcfcf" stroke-opacity="0.6" stroke-width="1.2"/><path d="M44 40 V54" fill="none" stroke="#cfcfcf" stroke-opacity="0.6" stroke-width="1.2"/><path d="M16 106 L27 85 Q50 68 85 60 L142 57 L147 95 L77 98 Z" fill="none" stroke="#cfcfcf" stroke-opacity="0.6" stroke-width="1.2"/><path d="M85 60 V98 M88 62 L90 95" fill="none" stroke="#cfcfcf" stroke-opacity="0.6" stroke-width="1.2"/><path d="M77 98 L140 92" fill="none" stroke="#cfcfcf" stroke-opacity="0.6" stroke-width="1.2"/><path d="M158 81 L162 65 H185 L223 85 Z" fill="none" stroke="#cfcfcf" stroke-opacity="0.6" stroke-width="1.2"/><path d="M185 65 V84" fill="none" stroke="#cfcfcf" stroke-opacity="0.6" stroke-width="1.2"/><path d="M177 103 L182 93 Q205 96 225 111 Z" fill="none" stroke="#cfcfcf" stroke-opacity="0.6" stroke-width="1.2"/><path d="M88 119 Q100 108 110 108 Q125 108 134 111 L88 120" fill="none" stroke="#cfcfcf" stroke-opacity="0.6" stroke-width="1.2"/><path d="M145 120 Q150 111 160 111 L177 118 Z" fill="none" stroke="#cfcfcf" stroke-opacity="0.6" stroke-width="1.2"/><path d="M183 113 Q200 108 222 112" fill="none" stroke="#cfcfcf" stroke-opacity="0.6" stroke-width="1.2"/><path d="M20 104 Q40 90 60 86 L85 84" fill="none" stroke="#cfcfcf" stroke-opacity="0.6" stroke-width="1.2"/><path d="M30 95 L45 75 L60 70" fill="none" stroke="#cfcfcf" stroke-opacity="0.6" stroke-width="1.2"/><path d="M95 88 L140 80" fill="none" stroke="#cfcfcf" stroke-opacity="0.6" stroke-width="1.2"/><path d="M100 78 L138 72" fill="none" stroke="#cfcfcf" stroke-opacity="0.6" stroke-width="1.2"/><path d="M27 52 L35 44 L60 42" fill="none" stroke="#cfcfcf" stroke-opacity="0.6" stroke-width="1.2"/><path d="M116 42 L150 36 L200 34" fill="none" stroke="#cfcfcf" stroke-opacity="0.6" stroke-width="1.2"/><path d="M162 72 L180 72 L215 84" fill="none" stroke="#cfcfcf" stroke-opacity="0.6" stroke-width="1.2"/><path d="M180 100 L200 104 L222 108" fill="none" stroke="#cfcfcf" stroke-opacity="0.6" stroke-width="1.2"/><path d="M70 24 L100 20" fill="none" stroke="#cfcfcf" stroke-opacity="0.6" stroke-width="1.2"/><path d="M92 116 L130 112" fill="none" stroke="#cfcfcf" stroke-opacity="0.6" stroke-width="1.2"/><path d="M150 117 L170 116" fill="none" stroke="#cfcfcf" stroke-opacity="0.6" stroke-width="1.2"/><path d="M30 90 Q35 80 40 88 Q45 96 50 80" fill="none" stroke="#cfcfcf" stroke-opacity="0.6" stroke-width="1.2"/><path d="M56 96 Q60 86 66 94" fill="none" stroke="#cfcfcf" stroke-opacity="0.6" stroke-width="1.2"/></g></svg>
<svg style="left:216px;top:808px;overflow:hidden" width="242" height="105" viewBox="0 0 242 105"><defs><linearGradient id="t5bg" x1="0" y1="0" x2="0" y2="1"><stop offset="0" stop-color="#a9a9a9"/><stop offset="1" stop-color="#a2a2a2"/></linearGradient>
<linearGradient id="t5body" x1="0" y1="0" x2="1" y2="1"><stop offset="0" stop-color="#3a3836"/><stop offset="1" stop-color="#2a2826"/></linearGradient></defs>
<rect width="242" height="105" fill="url(#t5bg)"/>
<path d="M4 39 L13 25 L47 17 L88 13 L142 16 L181 24 L221 36 L233 43 L235 60 L224 71 L217 95 L178 95 L173 87 L134 85 L79 74 L47 66 L24 54 L9 46 Z" fill="url(#t5body)"/>
<path d="M27 33 L47 22 L88 20 L28 35 Z" fill="#c8bba8"/>
<path d="M66 16 L88 15 L87 18 L66 19 Z" fill="#9a9a9a"/>
<path d="M101 19 L158 22 L161 28 L98 24 Z" fill="#a6a6a6"/>
<path d="M95 25 L158 31 L159 38 L91 28 Z" fill="#d8d4cc"/>
<path d="M167 28 L176 30 L173 38 Z" fill="#9c9c9c"/>
<path d="M60 46 L74 33 L101 32 L126 41 L154 46 L158 54 L123 52 L101 54 L69 47 Z" fill="#f3f3f3"/>
<path d="M66 54 L102 57 L120 61 L131 66 L123 71 L88 69 L72 61 Z" fill="#d7c2a6"/>
<path d="M71 61 L126 69 L117 72 L82 68 Z" fill="#f4f0ea"/>
<path d="M134 79 L173 76 L173 88 L142 88 Z" fill="#5e4a3a"/>
<path d="M154 74 L167 72 L186 76 L158 79 Z" fill="#e2d3bf"/>
<path d="M39 47 L47 49 L50 54 L43 52 Z" fill="#c9b59c"/>
<path d="M183 39 L197 47 L189 46 Z" fill="#d0cbc2"/>
<path d="M47 57 L70 70 L79 74 L60 62 Z" fill="#6a5646"/></svg>
<svg style="left:218.5px;top:317.5px" width="15" height="15"><circle cx="7.5" cy="7.5" r="6.6" fill="#2e2e2e" stroke="#c4c4c4" stroke-width="1.1"/><path d="M5.6 4 L11 7.5 L5.6 11 Z" fill="#f2f2f2"/></svg>
<svg style="left:218.5px;top:468.5px" width="15" height="15"><circle cx="7.5" cy="7.5" r="6.6" fill="#2e2e2e" stroke="#c4c4c4" stroke-width="1.1"/><path d="M5.6 4 L11 7.5 L5.6 11 Z" fill="#f2f2f2"/></svg>
<svg style="left:218.5px;top:620.0px" width="15" height="15"><circle cx="7.5" cy="7.5" r="6.6" fill="#2e2e2e" stroke="#c4c4c4" stroke-width="1.1"/><path d="M5.6 4 L11 7.5 L5.6 11 Z" fill="#f2f2f2"/></svg>
<svg style="left:218.5px;top:762.0px" width="15" height="15"><circle cx="7.5" cy="7.5" r="6.6" fill="#2e2e2e" stroke="#c4c4c4" stroke-width="1.1"/><path d="M5.6 4 L11 7.5 L5.6 11 Z" fill="#f2f2f2"/></svg>
<svg style="left:218.5px;top:894.5px" width="15" height="15"><circle cx="7.5" cy="7.5" r="6.6" fill="#2e2e2e" stroke="#c4c4c4" stroke-width="1.1"/><path d="M5.6 4 L11 7.5 L5.6 11 Z" fill="#f2f2f2"/></svg>
<div class="a" style="left:1081.5px;top:143.5px;width:58.3px;height:772.5px;background:#1a90d6;"></div>
<div class="a" style="left:1086.1px;top:159px;width:48.7px;height:757px;background:#d9d9d9;"></div>
<div class="a" style="left:1086.1px;top:159px;width:48.7px;height:16px;background:#ffffff;"></div>
<div class="t" style="left:1090.1px;top:160px;color:#6e6e6e">Status</div>
<svg style="left:1086.1px;top:146px" width="13" height="11"><rect x="0" y="0" width="12.5" height="11" fill="#eef3fb"/><path d="M2.5 2.5 L5 5.5 L2.5 8.5 M6.3 2.5 L8.8 5.5 L6.3 8.5" fill="none" stroke="#8aa6e0" stroke-width="1.5"/></svg>
<div class="t" style="left:1103.1px;top:145px;color:#b5f0ff;font-size:11.3px;font-weight:bold">DSG</div>
<div class="a" style="left:1139.8px;top:143.5px;width:58.3px;height:772.5px;background:#22cc33;"></div>
<div class="a" style="left:1144.4px;top:159px;width:48.7px;height:757px;background:#d9d9d9;"></div>
<div class="a" style="left:1144.4px;top:159px;width:48.7px;height:16px;background:#ffffff;"></div>
<div class="t" style="left:1148.4px;top:160px;color:#6e6e6e">Status</div>
<svg style="left:1144.4px;top:146px" width="13" height="11"><rect x="0" y="0" width="12.5" height="11" fill="#eef3fb"/><path d="M2.5 2.5 L5 5.5 L2.5 8.5 M6.3 2.5 L8.8 5.5 L6.3 8.5" fill="none" stroke="#8aa6e0" stroke-width="1.5"/></svg>
<div class="t" style="left:1161.4px;top:145px;color:#b8ffb0;font-size:11.3px;font-weight:bold">MOD</div>
<div class="a" style="left:1198.1px;top:143.5px;width:58.3px;height:772.5px;background:#e8870e;"></div>
<div class="a" style="left:1202.7px;top:159px;width:48.7px;height:757px;background:#d9d9d9;"></div>
<div class="a" style="left:1202.7px;top:159px;width:48.7px;height:16px;background:#ffffff;"></div>
<div class="t" style="left:1206.7px;top:160px;color:#6e6e6e">Status</div>
<svg style="left:1202.7px;top:146px" width="13" height="11"><rect x="0" y="0" width="12.5" height="11" fill="#eef3fb"/><path d="M2.5 2.5 L5 5.5 L2.5 8.5 M6.3 2.5 L8.8 5.5 L6.3 8.5" fill="none" stroke="#8aa6e0" stroke-width="1.5"/></svg>
<div class="t" style="left:1219.7px;top:145px;color:#ffd590;font-size:11.3px;font-weight:bold">VIZ</div>
<div class="a" style="left:1256.4px;top:143.5px;width:58.3px;height:772.5px;background:#d9f161;"></div>
<div class="a" style="left:1261.0px;top:159px;width:48.7px;height:757px;background:#d9d9d9;"></div>
<div class="a" style="left:1261.0px;top:159px;width:48.7px;height:16px;background:#ffffff;"></div>
<div class="t" style="left:1265.0px;top:160px;color:#6e6e6e">Status</div>
<svg style="left:1261.0px;top:146px" width="13" height="11"><rect x="0" y="0" width="12.5" height="11" fill="#eef3fb"/><path d="M2.5 2.5 L5 5.5 L2.5 8.5 M6.3 2.5 L8.8 5.5 L6.3 8.5" fill="none" stroke="#8aa6e0" stroke-width="1.5"/></svg>
<div class="t" style="left:1278.0px;top:145px;color:#3f6b10;font-size:11.3px;font-weight:bold">CM</div>
<div class="a" style="left:1314.7px;top:143.5px;width:58.3px;height:772.5px;background:#d9b5f7;"></div>
<div class="a" style="left:1319.3px;top:159px;width:48.7px;height:757px;background:#d9d9d9;"></div>
<div class="a" style="left:1319.3px;top:159px;width:48.7px;height:16px;background:#ffffff;"></div>
<div class="t" style="left:1323.3px;top:160px;color:#6e6e6e">Status</div>
<svg style="left:1319.3px;top:146px" width="13" height="11"><rect x="0" y="0" width="12.5" height="11" fill="#eef3fb"/><path d="M2.5 2.5 L5 5.5 L2.5 8.5 M6.3 2.5 L8.8 5.5 L6.3 8.5" fill="none" stroke="#8aa6e0" stroke-width="1.5"/></svg>
<div class="t" style="left:1336.3px;top:145px;color:#5b3590;font-size:11.3px;font-weight:bold">CSA</div>
<div class="a" style="left:1086.1px;top:196px;width:48.7px;height:1px;background:#e6e6e6;"></div>
<div class="a" style="left:1144.4px;top:196px;width:48.7px;height:1px;background:#e6e6e6;"></div>
<div class="a" style="left:1202.7px;top:196px;width:48.7px;height:1px;background:#e6e6e6;"></div>
<div class="a" style="left:1261.0px;top:196px;width:48.7px;height:1px;background:#e6e6e6;"></div>
<div class="a" style="left:1319.3px;top:196px;width:48.7px;height:1px;background:#e6e6e6;"></div>
<div class="a" style="left:1086.1px;top:339px;width:48.7px;height:1px;background:#e6e6e6;"></div>
<div class="a" style="left:1144.4px;top:339px;width:48.7px;height:1px;background:#e6e6e6;"></div>
<div class="a" style="left:1202.7px;top:339px;width:48.7px;height:1px;background:#e6e6e6;"></div>
<div class="a" style="left:1261.0px;top:339px;width:48.7px;height:1px;background:#e6e6e6;"></div>
<div class="a" style="left:1319.3px;top:339px;width:48.7px;height:1px;background:#e6e6e6;"></div>
<div class="a" style="left:1086.1px;top:490px;width:48.7px;height:1px;background:#e6e6e6;"></div>
<div class="a" style="left:1144.4px;top:490px;width:48.7px;height:1px;background:#e6e6e6;"></div>
<div class="a" style="left:1202.7px;top:490px;width:48.7px;height:1px;background:#e6e6e6;"></div>
<div class="a" style="left:1261.0px;top:490px;width:48.7px;height:1px;background:#e6e6e6;"></div>
<div class="a" style="left:1319.3px;top:490px;width:48.7px;height:1px;background:#e6e6e6;"></div>
<div class="a" style="left:1086.1px;top:641px;width:48.7px;height:1px;background:#e6e6e6;"></div>
<div class="a" style="left:1144.4px;top:641px;width:48.7px;height:1px;background:#e6e6e6;"></div>
<div class="a" style="left:1202.7px;top:641px;width:48.7px;height:1px;background:#e6e6e6;"></div>
<div class="a" style="left:1261.0px;top:641px;width:48.7px;height:1px;background:#e6e6e6;"></div>
<div class="a" style="left:1319.3px;top:641px;width:48.7px;height:1px;background:#e6e6e6;"></div>
<div class="a" style="left:1086.1px;top:784px;width:48.7px;height:1px;background:#e6e6e6;"></div>
<div class="a" style="left:1144.4px;top:784px;width:48.7px;height:1px;background:#e6e6e6;"></div>
<div class="a" style="left:1202.7px;top:784px;width:48.7px;height:1px;background:#e6e6e6;"></div>
<div class="a" style="left:1261.0px;top:784px;width:48.7px;height:1px;background:#e6e6e6;"></div>
<div class="a" style="left:1319.3px;top:784px;width:48.7px;height:1px;background:#e6e6e6;"></div>
<div class="a" style="left:1086.1px;top:805px;width:48.7px;height:1px;background:#e6e6e6;"></div>
<div class="a" style="left:1144.4px;top:805px;width:48.7px;height:1px;background:#e6e6e6;"></div>
<div class="a" style="left:1202.7px;top:805px;width:48.7px;height:1px;background:#e6e6e6;"></div>
<div class="a" style="left:1261.0px;top:805px;width:48.7px;height:1px;background:#e6e6e6;"></div>
<div class="a" style="left:1319.3px;top:805px;width:48.7px;height:1px;background:#e6e6e6;"></div>
<div class="a" style="left:1086.1px;top:196.5px;width:48.7px;height:18.5px;background:#b6b6b6;border-bottom:1px solid #c8c8c8"></div>
<svg style="left:1104px;top:198px" width="14" height="13"><defs><radialGradient id="gc" cx="50%" cy="40%" r="60%"><stop offset="0" stop-color="#4fd24f"/><stop offset="0.6" stop-color="#18a018"/><stop offset="1" stop-color="#0a6e0a"/></radialGradient></defs><circle cx="5.5" cy="6.5" r="5.3" fill="url(#gc)"/><path d="M3.2 6 L5.4 8.3 L11.2 1.4" fill="none" stroke="#0b4a0b" stroke-width="1.7" stroke-linecap="round"/></svg>
<div class="a" style="left:1086.1px;top:215.0px;width:48.7px;height:18.5px;background:#b6b6b6;border-bottom:1px solid #c8c8c8"></div>
<svg style="left:1104px;top:216px" width="14" height="13"><defs><radialGradient id="gc" cx="50%" cy="40%" r="60%"><stop offset="0" stop-color="#4fd24f"/><stop offset="0.6" stop-color="#18a018"/><stop offset="1" stop-color="#0a6e0a"/></radialGradient></defs><circle cx="5.5" cy="6.5" r="5.3" fill="url(#gc)"/><path d="M3.2 6 L5.4 8.3 L11.2 1.4" fill="none" stroke="#0b4a0b" stroke-width="1.7" stroke-linecap="round"/></svg>
<div class="a" style="left:1086.1px;top:233.5px;width:48.7px;height:18.5px;background:#b6b6b6;border-bottom:1px solid #c8c8c8"></div>
<svg style="left:1104px;top:234px" width="14" height="13"><defs><radialGradient id="gc" cx="50%" cy="40%" r="60%"><stop offset="0" stop-color="#4fd24f"/><stop offset="0.6" stop-color="#18a018"/><stop offset="1" stop-color="#0a6e0a"/></radialGradient></defs><circle cx="5.5" cy="6.5" r="5.3" fill="url(#gc)"/><path d="M3.2 6 L5.4 8.3 L11.2 1.4" fill="none" stroke="#0b4a0b" stroke-width="1.7" stroke-linecap="round"/></svg>
<div class="a" style="left:1086.1px;top:252.0px;width:48.7px;height:18.5px;background:#b6b6b6;border-bottom:1px solid #c8c8c8"></div>
<svg style="left:1104px;top:253px" width="14" height="13"><defs><radialGradient id="gc" cx="50%" cy="40%" r="60%"><stop offset="0" stop-color="#4fd24f"/><stop offset="0.6" stop-color="#18a018"/><stop offset="1" stop-color="#0a6e0a"/></radialGradient></defs><circle cx="5.5" cy="6.5" r="5.3" fill="url(#gc)"/><path d="M3.2 6 L5.4 8.3 L11.2 1.4" fill="none" stroke="#0b4a0b" stroke-width="1.7" stroke-linecap="round"/></svg>
<div class="a" style="left:1086.1px;top:270.5px;width:48.7px;height:18.5px;background:#d9d9d9;border-bottom:1px solid #e2e2e2"></div>
<div class="a" style="left:1108px;top:282px;width:4px;height:1px;background:#6a6a6a;"></div>
<div class="a" style="left:1086.1px;top:289.0px;width:48.7px;height:18.5px;background:#d9d9d9;border-bottom:1px solid #e2e2e2"></div>
<div class="a" style="left:1108px;top:300px;width:4px;height:1px;background:#6a6a6a;"></div>
<div class="a" style="left:1144.4px;top:196.5px;width:48.7px;height:18.5px;background:#b6b6b6;border-bottom:1px solid #c8c8c8"></div>
<svg style="left:1163px;top:198px" width="14" height="13"><defs><radialGradient id="gc" cx="50%" cy="40%" r="60%"><stop offset="0" stop-color="#4fd24f"/><stop offset="0.6" stop-color="#18a018"/><stop offset="1" stop-color="#0a6e0a"/></radialGradient></defs><circle cx="5.5" cy="6.5" r="5.3" fill="url(#gc)"/><path d="M3.2 6 L5.4 8.3 L11.2 1.4" fill="none" stroke="#0b4a0b" stroke-width="1.7" stroke-linecap="round"/></svg>
<div class="a" style="left:1144.4px;top:215.0px;width:48.7px;height:18.5px;background:#b6b6b6;border-bottom:1px solid #c8c8c8"></div>
<svg style="left:1163px;top:216px" width="14" height="13"><defs><radialGradient id="gc" cx="50%" cy="40%" r="60%"><stop offset="0" stop-color="#4fd24f"/><stop offset="0.6" stop-color="#18a018"/><stop offset="1" stop-color="#0a6e0a"/></radialGradient></defs><circle cx="5.5" cy="6.5" r="5.3" fill="url(#gc)"/><path d="M3.2 6 L5.4 8.3 L11.2 1.4" fill="none" stroke="#0b4a0b" stroke-width="1.7" stroke-linecap="round"/></svg>
<div class="a" style="left:1144.4px;top:233.5px;width:48.7px;height:18.5px;background:#b6b6b6;border-bottom:1px solid #c8c8c8"></div>
<svg style="left:1163px;top:234px" width="14" height="13"><defs><radialGradient id="gc" cx="50%" cy="40%" r="60%"><stop offset="0" stop-color="#4fd24f"/><stop offset="0.6" stop-color="#18a018"/><stop offset="1" stop-color="#0a6e0a"/></radialGradient></defs><circle cx="5.5" cy="6.5" r="5.3" fill="url(#gc)"/><path d="M3.2 6 L5.4 8.3 L11.2 1.4" fill="none" stroke="#0b4a0b" stroke-width="1.7" stroke-linecap="round"/></svg>
<div class="a" style="left:1144.4px;top:252.0px;width:48.7px;height:18.5px;background:#b6b6b6;border-bottom:1px solid #c8c8c8"></div>
<svg style="left:1163px;top:253px" width="14" height="13"><defs><radialGradient id="gc" cx="50%" cy="40%" r="60%"><stop offset="0" stop-color="#4fd24f"/><stop offset="0.6" stop-color="#18a018"/><stop offset="1" stop-color="#0a6e0a"/></radialGradient></defs><circle cx="5.5" cy="6.5" r="5.3" fill="url(#gc)"/><path d="M3.2 6 L5.4 8.3 L11.2 1.4" fill="none" stroke="#0b4a0b" stroke-width="1.7" stroke-linecap="round"/></svg>
<div class="a" style="left:1144.4px;top:270.5px;width:48.7px;height:18.5px;background:#97e3a5;"></div>
<svg style="left:1163px;top:270px" width="13" height="15"><path d="M3 7 V3 Q3 2 4 2 Q5 2 5 3 V6 V2 Q5 1 6 1 Q7 1 7 2 V6 V2.5 Q7 1.5 8 1.5 Q9 1.5 9 2.5 V6.5 V4 Q9 3 10 3 Q11 3 11 4 V9 Q11 14 6.5 14 Q3.5 14 2 11 L0.5 8 Q0 7 1 6.5 Q2 6.2 3 7.5 Z" fill="#111"/></svg>
<div class="a" style="left:1202.7px;top:196.5px;width:48.7px;height:18.5px;background:#b6b6b6;border-bottom:1px solid #c8c8c8"></div>
<svg style="left:1221px;top:198px" width="14" height="13"><defs><radialGradient id="gc" cx="50%" cy="40%" r="60%"><stop offset="0" stop-color="#4fd24f"/><stop offset="0.6" stop-color="#18a018"/><stop offset="1" stop-color="#0a6e0a"/></radialGradient></defs><circle cx="5.5" cy="6.5" r="5.3" fill="url(#gc)"/><path d="M3.2 6 L5.4 8.3 L11.2 1.4" fill="none" stroke="#0b4a0b" stroke-width="1.7" stroke-linecap="round"/></svg>
<div class="a" style="left:1202.7px;top:215.0px;width:48.7px;height:18.5px;background:#b6b6b6;border-bottom:1px solid #c8c8c8"></div>
<svg style="left:1221px;top:216px" width="14" height="13"><defs><radialGradient id="gc" cx="50%" cy="40%" r="60%"><stop offset="0" stop-color="#4fd24f"/><stop offset="0.6" stop-color="#18a018"/><stop offset="1" stop-color="#0a6e0a"/></radialGradient></defs><circle cx="5.5" cy="6.5" r="5.3" fill="url(#gc)"/><path d="M3.2 6 L5.4 8.3 L11.2 1.4" fill="none" stroke="#0b4a0b" stroke-width="1.7" stroke-linecap="round"/></svg>
<div class="a" style="left:1202.7px;top:233.5px;width:48.7px;height:18.5px;background:#b6b6b6;border-bottom:1px solid #c8c8c8"></div>
<svg style="left:1221px;top:234px" width="14" height="13"><defs><radialGradient id="gc" cx="50%" cy="40%" r="60%"><stop offset="0" stop-color="#4fd24f"/><stop offset="0.6" stop-color="#18a018"/><stop offset="1" stop-color="#0a6e0a"/></radialGradient></defs><circle cx="5.5" cy="6.5" r="5.3" fill="url(#gc)"/><path d="M3.2 6 L5.4 8.3 L11.2 1.4" fill="none" stroke="#0b4a0b" stroke-width="1.7" stroke-linecap="round"/></svg>
<div class="a" style="left:1202.7px;top:252.0px;width:48.7px;height:18.5px;background:#d9d9d9;border-bottom:1px solid #e2e2e2"></div>
<div class="a" style="left:1225px;top:263px;width:4px;height:1px;background:#6a6a6a;"></div>
<div class="a" style="left:1202.7px;top:270.5px;width:48.7px;height:18.5px;background:#d9d9d9;border-bottom:1px solid #e2e2e2"></div>
<div class="a" style="left:1225px;top:282px;width:4px;height:1px;background:#6a6a6a;"></div>
<div class="a" style="left:1261.0px;top:196.5px;width:48.7px;height:18.5px;background:#fb9e9e;border-bottom:1px solid #fcc0c0"></div>
<svg style="left:1278.5px;top:197.5px" width="13.0" height="13.0"><circle cx="6.5" cy="6.5" r="4.4" fill="#f4f4f4" stroke="#1e1e1e" stroke-width="2.3"/><line x1="3.3" y1="3.3" x2="9.7" y2="9.7" stroke="#1e1e1e" stroke-width="2"/></svg>
<div class="a" style="left:1261.0px;top:215.0px;width:48.7px;height:18.5px;background:#b6b6b6;border-bottom:1px solid #c8c8c8"></div>
<svg style="left:1279px;top:216px" width="14" height="13"><defs><radialGradient id="gc" cx="50%" cy="40%" r="60%"><stop offset="0" stop-color="#4fd24f"/><stop offset="0.6" stop-color="#18a018"/><stop offset="1" stop-color="#0a6e0a"/></radialGradient></defs><circle cx="5.5" cy="6.5" r="5.3" fill="url(#gc)"/><path d="M3.2 6 L5.4 8.3 L11.2 1.4" fill="none" stroke="#0b4a0b" stroke-width="1.7" stroke-linecap="round"/></svg>
<div class="a" style="left:1261.0px;top:233.5px;width:48.7px;height:18.5px;background:#b6b6b6;border-bottom:1px solid #c8c8c8"></div>
<svg style="left:1279px;top:234px" width="14" height="13"><defs><radialGradient id="gc" cx="50%" cy="40%" r="60%"><stop offset="0" stop-color="#4fd24f"/><stop offset="0.6" stop-color="#18a018"/><stop offset="1" stop-color="#0a6e0a"/></radialGradient></defs><circle cx="5.5" cy="6.5" r="5.3" fill="url(#gc)"/><path d="M3.2 6 L5.4 8.3 L11.2 1.4" fill="none" stroke="#0b4a0b" stroke-width="1.7" stroke-linecap="round"/></svg>
<div class="a" style="left:1261.0px;top:252.0px;width:48.7px;height:18.5px;background:#d9d9d9;border-bottom:1px solid #e2e2e2"></div>
<div class="a" style="left:1283px;top:263px;width:4px;height:1px;background:#6a6a6a;"></div>
<div class="a" style="left:1261.0px;top:270.5px;width:48.7px;height:18.5px;background:#d9d9d9;border-bottom:1px solid #e2e2e2"></div>
<div class="a" style="left:1283px;top:282px;width:4px;height:1px;background:#6a6a6a;"></div>
<div class="a" style="left:1319.3px;top:196.5px;width:48.7px;height:18.5px;background:#b6b6b6;border-bottom:1px solid #c8c8c8"></div>
<svg style="left:1338px;top:198px" width="14" height="13"><defs><radialGradient id="gc" cx="50%" cy="40%" r="60%"><stop offset="0" stop-color="#4fd24f"/><stop offset="0.6" stop-color="#18a018"/><stop offset="1" stop-color="#0a6e0a"/></radialGradient></defs><circle cx="5.5" cy="6.5" r="5.3" fill="url(#gc)"/><path d="M3.2 6 L5.4 8.3 L11.2 1.4" fill="none" stroke="#0b4a0b" stroke-width="1.7" stroke-linecap="round"/></svg>
<div class="a" style="left:1319.3px;top:215.0px;width:48.7px;height:18.5px;background:#d9d9d9;border-bottom:1px solid #e2e2e2"></div>
<div class="a" style="left:1342px;top:226px;width:4px;height:1px;background:#6a6a6a;"></div>
<div class="a" style="left:1319.3px;top:233.5px;width:48.7px;height:18.5px;background:#d9d9d9;border-bottom:1px solid #e2e2e2"></div>
<div class="a" style="left:1342px;top:244px;width:4px;height:1px;background:#6a6a6a;"></div>
<div class="a" style="left:1086.1px;top:339.5px;width:48.7px;height:18.5px;background:#fb9e9e;border-bottom:1px solid #fcc0c0"></div>
<svg style="left:1103.5px;top:341.5px" width="13.0" height="13.0"><circle cx="6.5" cy="6.5" r="4.4" fill="#f4f4f4" stroke="#1e1e1e" stroke-width="2.3"/><line x1="3.3" y1="3.3" x2="9.7" y2="9.7" stroke="#1e1e1e" stroke-width="2"/></svg>
<div class="a" style="left:1086.1px;top:358.0px;width:48.7px;height:18.5px;background:#fb9e9e;border-bottom:1px solid #fcc0c0"></div>
<svg style="left:1103.5px;top:359.5px" width="13.0" height="13.0"><circle cx="6.5" cy="6.5" r="4.4" fill="#f4f4f4" stroke="#1e1e1e" stroke-width="2.3"/><line x1="3.3" y1="3.3" x2="9.7" y2="9.7" stroke="#1e1e1e" stroke-width="2"/></svg>
<div class="a" style="left:1144.4px;top:339.5px;width:48.7px;height:18.5px;background:#fb9e9e;border-bottom:1px solid #fcc0c0"></div>
<svg style="left:1162.5px;top:341.5px" width="13.0" height="13.0"><circle cx="6.5" cy="6.5" r="4.4" fill="#f4f4f4" stroke="#1e1e1e" stroke-width="2.3"/><line x1="3.3" y1="3.3" x2="9.7" y2="9.7" stroke="#1e1e1e" stroke-width="2"/></svg>
<div class="a" style="left:1144.4px;top:358.0px;width:48.7px;height:18.5px;background:#fb9e9e;border-bottom:1px solid #fcc0c0"></div>
<svg style="left:1162.5px;top:359.5px" width="13.0" height="13.0"><circle cx="6.5" cy="6.5" r="4.4" fill="#f4f4f4" stroke="#1e1e1e" stroke-width="2.3"/><line x1="3.3" y1="3.3" x2="9.7" y2="9.7" stroke="#1e1e1e" stroke-width="2"/></svg>
<div class="a" style="left:1202.7px;top:339.5px;width:48.7px;height:18.5px;background:#fb9e9e;border-bottom:1px solid #fcc0c0"></div>
<svg style="left:1220.5px;top:341.5px" width="13.0" height="13.0"><circle cx="6.5" cy="6.5" r="4.4" fill="#f4f4f4" stroke="#1e1e1e" stroke-width="2.3"/><line x1="3.3" y1="3.3" x2="9.7" y2="9.7" stroke="#1e1e1e" stroke-width="2"/></svg>
<div class="a" style="left:1261.0px;top:339.5px;width:48.7px;height:18.5px;background:#fb9e9e;border-bottom:1px solid #fcc0c0"></div>
<svg style="left:1278.5px;top:341.5px" width="13.0" height="13.0"><circle cx="6.5" cy="6.5" r="4.4" fill="#f4f4f4" stroke="#1e1e1e" stroke-width="2.3"/><line x1="3.3" y1="3.3" x2="9.7" y2="9.7" stroke="#1e1e1e" stroke-width="2"/></svg>
<div class="a" style="left:1086.1px;top:490.5px;width:48.7px;height:18.5px;background:#fb9e9e;border-bottom:1px solid #fcc0c0"></div>
<svg style="left:1103.5px;top:491.5px" width="13.0" height="13.0"><circle cx="6.5" cy="6.5" r="4.4" fill="#f4f4f4" stroke="#1e1e1e" stroke-width="2.3"/><line x1="3.3" y1="3.3" x2="9.7" y2="9.7" stroke="#1e1e1e" stroke-width="2"/></svg>
<div class="a" style="left:1086.1px;top:509.0px;width:48.7px;height:18.5px;background:#fb9e9e;border-bottom:1px solid #fcc0c0"></div>
<svg style="left:1103.5px;top:510.5px" width="13.0" height="13.0"><circle cx="6.5" cy="6.5" r="4.4" fill="#f4f4f4" stroke="#1e1e1e" stroke-width="2.3"/><line x1="3.3" y1="3.3" x2="9.7" y2="9.7" stroke="#1e1e1e" stroke-width="2"/></svg>
<div class="a" style="left:1086.1px;top:527.5px;width:48.7px;height:18.5px;background:#fb9e9e;border-bottom:1px solid #fcc0c0"></div>
<svg style="left:1103.5px;top:529.5px" width="13.0" height="13.0"><circle cx="6.5" cy="6.5" r="4.4" fill="#f4f4f4" stroke="#1e1e1e" stroke-width="2.3"/><line x1="3.3" y1="3.3" x2="9.7" y2="9.7" stroke="#1e1e1e" stroke-width="2"/></svg>
<div class="a" style="left:1144.4px;top:490.5px;width:48.7px;height:18.5px;background:#fb9e9e;border-bottom:1px solid #fcc0c0"></div>
<svg style="left:1162.5px;top:491.5px" width="13.0" height="13.0"><circle cx="6.5" cy="6.5" r="4.4" fill="#f4f4f4" stroke="#1e1e1e" stroke-width="2.3"/><line x1="3.3" y1="3.3" x2="9.7" y2="9.7" stroke="#1e1e1e" stroke-width="2"/></svg>
<div class="a" style="left:1144.4px;top:509.0px;width:48.7px;height:18.5px;background:#fb9e9e;border-bottom:1px solid #fcc0c0"></div>
<svg style="left:1162.5px;top:510.5px" width="13.0" height="13.0"><circle cx="6.5" cy="6.5" r="4.4" fill="#f4f4f4" stroke="#1e1e1e" stroke-width="2.3"/><line x1="3.3" y1="3.3" x2="9.7" y2="9.7" stroke="#1e1e1e" stroke-width="2"/></svg>
<div class="a" style="left:1144.4px;top:527.5px;width:48.7px;height:18.5px;background:#fb9e9e;border-bottom:1px solid #fcc0c0"></div>
<svg style="left:1162.5px;top:529.5px" width="13.0" height="13.0"><circle cx="6.5" cy="6.5" r="4.4" fill="#f4f4f4" stroke="#1e1e1e" stroke-width="2.3"/><line x1="3.3" y1="3.3" x2="9.7" y2="9.7" stroke="#1e1e1e" stroke-width="2"/></svg>
<div class="a" style="left:1202.7px;top:490.5px;width:48.7px;height:18.5px;background:#fb9e9e;border-bottom:1px solid #fcc0c0"></div>
<svg style="left:1220.5px;top:491.5px" width="13.0" height="13.0"><circle cx="6.5" cy="6.5" r="4.4" fill="#f4f4f4" stroke="#1e1e1e" stroke-width="2.3"/><line x1="3.3" y1="3.3" x2="9.7" y2="9.7" stroke="#1e1e1e" stroke-width="2"/></svg>
<div class="a" style="left:1202.7px;top:509.0px;width:48.7px;height:18.5px;background:#fb9e9e;border-bottom:1px solid #fcc0c0"></div>
<svg style="left:1220.5px;top:510.5px" width="13.0" height="13.0"><circle cx="6.5" cy="6.5" r="4.4" fill="#f4f4f4" stroke="#1e1e1e" stroke-width="2.3"/><line x1="3.3" y1="3.3" x2="9.7" y2="9.7" stroke="#1e1e1e" stroke-width="2"/></svg>
<div class="a" style="left:1261.0px;top:490.5px;width:48.7px;height:18.5px;background:#fb9e9e;border-bottom:1px solid #fcc0c0"></div>
<svg style="left:1278.5px;top:491.5px" width="13.0" height="13.0"><circle cx="6.5" cy="6.5" r="4.4" fill="#f4f4f4" stroke="#1e1e1e" stroke-width="2.3"/><line x1="3.3" y1="3.3" x2="9.7" y2="9.7" stroke="#1e1e1e" stroke-width="2"/></svg>
<div class="a" style="left:1261.0px;top:509.0px;width:48.7px;height:18.5px;background:#fb9e9e;border-bottom:1px solid #fcc0c0"></div>
<svg style="left:1278.5px;top:510.5px" width="13.0" height="13.0"><circle cx="6.5" cy="6.5" r="4.4" fill="#f4f4f4" stroke="#1e1e1e" stroke-width="2.3"/><line x1="3.3" y1="3.3" x2="9.7" y2="9.7" stroke="#1e1e1e" stroke-width="2"/></svg>
<div class="a" style="left:1086.1px;top:641.5px;width:48.7px;height:18.5px;background:#fb9e9e;border-bottom:1px solid #fcc0c0"></div>
<svg style="left:1103.5px;top:643.5px" width="13.0" height="13.0"><circle cx="6.5" cy="6.5" r="4.4" fill="#f4f4f4" stroke="#1e1e1e" stroke-width="2.3"/><line x1="3.3" y1="3.3" x2="9.7" y2="9.7" stroke="#1e1e1e" stroke-width="2"/></svg>
<div class="a" style="left:1144.4px;top:641.5px;width:48.7px;height:18.5px;background:#fb9e9e;border-bottom:1px solid #fcc0c0"></div>
<svg style="left:1162.5px;top:643.5px" width="13.0" height="13.0"><circle cx="6.5" cy="6.5" r="4.4" fill="#f4f4f4" stroke="#1e1e1e" stroke-width="2.3"/><line x1="3.3" y1="3.3" x2="9.7" y2="9.7" stroke="#1e1e1e" stroke-width="2"/></svg>
<div class="a" style="left:1086.1px;top:805.5px;width:48.7px;height:18.5px;background:#b6b6b6;border-bottom:1px solid #c8c8c8"></div>
<svg style="left:1104px;top:806px" width="14" height="13"><defs><radialGradient id="gc" cx="50%" cy="40%" r="60%"><stop offset="0" stop-color="#4fd24f"/><stop offset="0.6" stop-color="#18a018"/><stop offset="1" stop-color="#0a6e0a"/></radialGradient></defs><circle cx="5.5" cy="6.5" r="5.3" fill="url(#gc)"/><path d="M3.2 6 L5.4 8.3 L11.2 1.4" fill="none" stroke="#0b4a0b" stroke-width="1.7" stroke-linecap="round"/></svg>
<div class="a" style="left:1086.1px;top:824.0px;width:48.7px;height:18.5px;background:#b6b6b6;border-bottom:1px solid #c8c8c8"></div>
<svg style="left:1104px;top:825px" width="14" height="13"><defs><radialGradient id="gc" cx="50%" cy="40%" r="60%"><stop offset="0" stop-color="#4fd24f"/><stop offset="0.6" stop-color="#18a018"/><stop offset="1" stop-color="#0a6e0a"/></radialGradient></defs><circle cx="5.5" cy="6.5" r="5.3" fill="url(#gc)"/><path d="M3.2 6 L5.4 8.3 L11.2 1.4" fill="none" stroke="#0b4a0b" stroke-width="1.7" stroke-linecap="round"/></svg>
<div class="a" style="left:1086.1px;top:842.5px;width:48.7px;height:18.5px;background:#b6b6b6;border-bottom:1px solid #c8c8c8"></div>
<svg style="left:1104px;top:844px" width="14" height="13"><defs><radialGradient id="gc" cx="50%" cy="40%" r="60%"><stop offset="0" stop-color="#4fd24f"/><stop offset="0.6" stop-color="#18a018"/><stop offset="1" stop-color="#0a6e0a"/></radialGradient></defs><circle cx="5.5" cy="6.5" r="5.3" fill="url(#gc)"/><path d="M3.2 6 L5.4 8.3 L11.2 1.4" fill="none" stroke="#0b4a0b" stroke-width="1.7" stroke-linecap="round"/></svg>
<div class="a" style="left:1086.1px;top:861.0px;width:48.7px;height:18.5px;background:#b6b6b6;border-bottom:1px solid #c8c8c8"></div>
<svg style="left:1104px;top:862px" width="14" height="13"><defs><radialGradient id="gc" cx="50%" cy="40%" r="60%"><stop offset="0" stop-color="#4fd24f"/><stop offset="0.6" stop-color="#18a018"/><stop offset="1" stop-color="#0a6e0a"/></radialGradient></defs><circle cx="5.5" cy="6.5" r="5.3" fill="url(#gc)"/><path d="M3.2 6 L5.4 8.3 L11.2 1.4" fill="none" stroke="#0b4a0b" stroke-width="1.7" stroke-linecap="round"/></svg>
<div class="a" style="left:1086.1px;top:879.5px;width:48.7px;height:18.5px;background:#d9d9d9;border-bottom:1px solid #e2e2e2"></div>
<div class="a" style="left:1108px;top:890px;width:4px;height:1px;background:#6a6a6a;"></div>
<div class="a" style="left:1086.1px;top:898.0px;width:48.7px;height:18.5px;background:#d9d9d9;border-bottom:1px solid #e2e2e2"></div>
<div class="a" style="left:1108px;top:909px;width:4px;height:1px;background:#6a6a6a;"></div>
<div class="a" style="left:1144.4px;top:805.5px;width:48.7px;height:18.5px;background:#b6b6b6;border-bottom:1px solid #c8c8c8"></div>
<svg style="left:1163px;top:806px" width="14" height="13"><defs><radialGradient id="gc" cx="50%" cy="40%" r="60%"><stop offset="0" stop-color="#4fd24f"/><stop offset="0.6" stop-color="#18a018"/><stop offset="1" stop-color="#0a6e0a"/></radialGradient></defs><circle cx="5.5" cy="6.5" r="5.3" fill="url(#gc)"/><path d="M3.2 6 L5.4 8.3 L11.2 1.4" fill="none" stroke="#0b4a0b" stroke-width="1.7" stroke-linecap="round"/></svg>
<div class="a" style="left:1144.4px;top:824.0px;width:48.7px;height:18.5px;background:#b6b6b6;border-bottom:1px solid #c8c8c8"></div>
<svg style="left:1163px;top:825px" width="14" height="13"><defs><radialGradient id="gc" cx="50%" cy="40%" r="60%"><stop offset="0" stop-color="#4fd24f"/><stop offset="0.6" stop-color="#18a018"/><stop offset="1" stop-color="#0a6e0a"/></radialGradient></defs><circle cx="5.5" cy="6.5" r="5.3" fill="url(#gc)"/><path d="M3.2 6 L5.4 8.3 L11.2 1.4" fill="none" stroke="#0b4a0b" stroke-width="1.7" stroke-linecap="round"/></svg>
<div class="a" style="left:1144.4px;top:842.5px;width:48.7px;height:18.5px;background:#b6b6b6;border-bottom:1px solid #c8c8c8"></div>
<svg style="left:1163px;top:844px" width="14" height="13"><defs><radialGradient id="gc" cx="50%" cy="40%" r="60%"><stop offset="0" stop-color="#4fd24f"/><stop offset="0.6" stop-color="#18a018"/><stop offset="1" stop-color="#0a6e0a"/></radialGradient></defs><circle cx="5.5" cy="6.5" r="5.3" fill="url(#gc)"/><path d="M3.2 6 L5.4 8.3 L11.2 1.4" fill="none" stroke="#0b4a0b" stroke-width="1.7" stroke-linecap="round"/></svg>
<div class="a" style="left:1144.4px;top:861.0px;width:48.7px;height:18.5px;background:#b6b6b6;border-bottom:1px solid #c8c8c8"></div>
<svg style="left:1163px;top:862px" width="14" height="13"><defs><radialGradient id="gc" cx="50%" cy="40%" r="60%"><stop offset="0" stop-color="#4fd24f"/><stop offset="0.6" stop-color="#18a018"/><stop offset="1" stop-color="#0a6e0a"/></radialGradient></defs><circle cx="5.5" cy="6.5" r="5.3" fill="url(#gc)"/><path d="M3.2 6 L5.4 8.3 L11.2 1.4" fill="none" stroke="#0b4a0b" stroke-width="1.7" stroke-linecap="round"/></svg>
<div class="a" style="left:1144.4px;top:879.5px;width:48.7px;height:18.5px;background:#97e3a5;"></div>
<svg style="left:1163px;top:880px" width="13" height="15"><path d="M3 7 V3 Q3 2 4 2 Q5 2 5 3 V6 V2 Q5 1 6 1 Q7 1 7 2 V6 V2.5 Q7 1.5 8 1.5 Q9 1.5 9 2.5 V6.5 V4 Q9 3 10 3 Q11 3 11 4 V9 Q11 14 6.5 14 Q3.5 14 2 11 L0.5 8 Q0 7 1 6.5 Q2 6.2 3 7.5 Z" fill="#111"/></svg>
<div class="a" style="left:1202.7px;top:805.5px;width:48.7px;height:18.5px;background:#b6b6b6;border-bottom:1px solid #c8c8c8"></div>
<svg style="left:1221px;top:806px" width="14" height="13"><defs><radialGradient id="gc" cx="50%" cy="40%" r="60%"><stop offset="0" stop-color="#4fd24f"/><stop offset="0.6" stop-color="#18a018"/><stop offset="1" stop-color="#0a6e0a"/></radialGradient></defs><circle cx="5.5" cy="6.5" r="5.3" fill="url(#gc)"/><path d="M3.2 6 L5.4 8.3 L11.2 1.4" fill="none" stroke="#0b4a0b" stroke-width="1.7" stroke-linecap="round"/></svg>
<div class="a" style="left:1202.7px;top:824.0px;width:48.7px;height:18.5px;background:#b6b6b6;border-bottom:1px solid #c8c8c8"></div>
<svg style="left:1221px;top:825px" width="14" height="13"><defs><radialGradient id="gc" cx="50%" cy="40%" r="60%"><stop offset="0" stop-color="#4fd24f"/><stop offset="0.6" stop-color="#18a018"/><stop offset="1" stop-color="#0a6e0a"/></radialGradient></defs><circle cx="5.5" cy="6.5" r="5.3" fill="url(#gc)"/><path d="M3.2 6 L5.4 8.3 L11.2 1.4" fill="none" stroke="#0b4a0b" stroke-width="1.7" stroke-linecap="round"/></svg>
<div class="a" style="left:1202.7px;top:842.5px;width:48.7px;height:18.5px;background:#b6b6b6;border-bottom:1px solid #c8c8c8"></div>
<svg style="left:1221px;top:844px" width="14" height="13"><defs><radialGradient id="gc" cx="50%" cy="40%" r="60%"><stop offset="0" stop-color="#4fd24f"/><stop offset="0.6" stop-color="#18a018"/><stop offset="1" stop-color="#0a6e0a"/></radialGradient></defs><circle cx="5.5" cy="6.5" r="5.3" fill="url(#gc)"/><path d="M3.2 6 L5.4 8.3 L11.2 1.4" fill="none" stroke="#0b4a0b" stroke-width="1.7" stroke-linecap="round"/></svg>
<div class="a" style="left:1202.7px;top:861.0px;width:48.7px;height:18.5px;background:#d9d9d9;border-bottom:1px solid #e2e2e2"></div>
<div class="a" style="left:1225px;top:872px;width:4px;height:1px;background:#6a6a6a;"></div>
<div class="a" style="left:1202.7px;top:879.5px;width:48.7px;height:18.5px;background:#d9d9d9;border-bottom:1px solid #e2e2e2"></div>
<div class="a" style="left:1225px;top:890px;width:4px;height:1px;background:#6a6a6a;"></div>
<div class="a" style="left:1261.0px;top:805.5px;width:48.7px;height:18.5px;background:#fb9e9e;border-bottom:1px solid #fcc0c0"></div>
<svg style="left:1278.5px;top:807.5px" width="13.0" height="13.0"><circle cx="6.5" cy="6.5" r="4.4" fill="#f4f4f4" stroke="#1e1e1e" stroke-width="2.3"/><line x1="3.3" y1="3.3" x2="9.7" y2="9.7" stroke="#1e1e1e" stroke-width="2"/></svg>
<div class="a" style="left:1261.0px;top:824.0px;width:48.7px;height:18.5px;background:#b6b6b6;border-bottom:1px solid #c8c8c8"></div>
<svg style="left:1279px;top:825px" width="14" height="13"><defs><radialGradient id="gc" cx="50%" cy="40%" r="60%"><stop offset="0" stop-color="#4fd24f"/><stop offset="0.6" stop-color="#18a018"/><stop offset="1" stop-color="#0a6e0a"/></radialGradient></defs><circle cx="5.5" cy="6.5" r="5.3" fill="url(#gc)"/><path d="M3.2 6 L5.4 8.3 L11.2 1.4" fill="none" stroke="#0b4a0b" stroke-width="1.7" stroke-linecap="round"/></svg>
<div class="a" style="left:1261.0px;top:842.5px;width:48.7px;height:18.5px;background:#b6b6b6;border-bottom:1px solid #c8c8c8"></div>
<svg style="left:1279px;top:844px" width="14" height="13"><defs><radialGradient id="gc" cx="50%" cy="40%" r="60%"><stop offset="0" stop-color="#4fd24f"/><stop offset="0.6" stop-color="#18a018"/><stop offset="1" stop-color="#0a6e0a"/></radialGradient></defs><circle cx="5.5" cy="6.5" r="5.3" fill="url(#gc)"/><path d="M3.2 6 L5.4 8.3 L11.2 1.4" fill="none" stroke="#0b4a0b" stroke-width="1.7" stroke-linecap="round"/></svg>
<div class="a" style="left:1261.0px;top:861.0px;width:48.7px;height:18.5px;background:#d9d9d9;border-bottom:1px solid #e2e2e2"></div>
<div class="a" style="left:1283px;top:872px;width:4px;height:1px;background:#6a6a6a;"></div>
<div class="a" style="left:1261.0px;top:879.5px;width:48.7px;height:18.5px;background:#d9d9d9;border-bottom:1px solid #e2e2e2"></div>
<div class="a" style="left:1283px;top:890px;width:4px;height:1px;background:#6a6a6a;"></div>
<div class="a" style="left:1319.3px;top:805.5px;width:48.7px;height:18.5px;background:#b6b6b6;border-bottom:1px solid #c8c8c8"></div>
<svg style="left:1338px;top:806px" width="14" height="13"><defs><radialGradient id="gc" cx="50%" cy="40%" r="60%"><stop offset="0" stop-color="#4fd24f"/><stop offset="0.6" stop-color="#18a018"/><stop offset="1" stop-color="#0a6e0a"/></radialGradient></defs><circle cx="5.5" cy="6.5" r="5.3" fill="url(#gc)"/><path d="M3.2 6 L5.4 8.3 L11.2 1.4" fill="none" stroke="#0b4a0b" stroke-width="1.7" stroke-linecap="round"/></svg>
<div class="a" style="left:1319.3px;top:824.0px;width:48.7px;height:18.5px;background:#d9d9d9;border-bottom:1px solid #e2e2e2"></div>
<div class="a" style="left:1342px;top:835px;width:4px;height:1px;background:#6a6a6a;"></div>
<div class="a" style="left:1319.3px;top:842.5px;width:48.7px;height:18.5px;background:#d9d9d9;border-bottom:1px solid #e2e2e2"></div>
<div class="a" style="left:1342px;top:854px;width:4px;height:1px;background:#6a6a6a;"></div>
<svg style="left:1380px;top:201px" width="12" height="13"><path d="M6 0.8 Q8 1 11 3.2 Q11.8 6.5 11 9.3 Q8 11.8 6 12.2 Q3.5 11.8 1 9.3 Q0.2 6.5 1 3.2 Q3.5 1 6 0.8 Z" fill="#6e6e6e"/><path d="M6 0.8 Q8 1 11 3.2 L6 5.8 L1 3.2 Q3.5 1 6 0.8 Z" fill="#a8a8a8"/><path d="M6 5.8 L1 3.2 Q0.2 6.5 1 9.3 Q3.5 11.8 6 12.2 Z" fill="#595959"/><path d="M8.2 6.3 L10 7.5 L9 9.5 L7.6 8.6 Z" fill="#d9d9d9"/></svg>
<div class="t u" style="left:1393px;top:198px;color:#5a5a5a;font-size:11.6px">Front Face</div>
<svg style="left:1452px;top:198px" width="12" height="12"><defs><linearGradient id="gd" x1="0" y1="0" x2="0" y2="1"><stop offset="0" stop-color="#1f8a1f"/><stop offset="0.3" stop-color="#8fe68a"/><stop offset="0.5" stop-color="#3cb83c"/><stop offset="1" stop-color="#0b6a0b"/></linearGradient></defs><circle cx="6" cy="6" r="5" fill="url(#gd)"/><circle cx="6" cy="6" r="4.6" fill="none" stroke="#0e6e0e" stroke-width="0.8"/></svg>
<div class="t" style="left:1464px;top:199px;color:#555;">,</div>
<svg style="left:1471px;top:202px" width="12" height="13"><path d="M6 0.8 Q8 1 11 3.2 Q11.8 6.5 11 9.3 Q8 11.8 6 12.2 Q3.5 11.8 1 9.3 Q0.2 6.5 1 3.2 Q3.5 1 6 0.8 Z" fill="#6e6e6e"/><path d="M6 0.8 Q8 1 11 3.2 L6 5.8 L1 3.2 Q3.5 1 6 0.8 Z" fill="#a8a8a8"/><path d="M6 5.8 L1 3.2 Q0.2 6.5 1 9.3 Q3.5 11.8 6 12.2 Z" fill="#595959"/><path d="M8.2 6.3 L10 7.5 L9 9.5 L7.6 8.6 Z" fill="#d9d9d9"/></svg>
<div class="t" style="left:1484px;top:199px;color:#777;font-size:10px;">...</div>
<svg style="left:1380px;top:810px" width="12" height="13"><path d="M6 0.8 Q8 1 11 3.2 Q11.8 6.5 11 9.3 Q8 11.8 6 12.2 Q3.5 11.8 1 9.3 Q0.2 6.5 1 3.2 Q3.5 1 6 0.8 Z" fill="#6e6e6e"/><path d="M6 0.8 Q8 1 11 3.2 L6 5.8 L1 3.2 Q3.5 1 6 0.8 Z" fill="#a8a8a8"/><path d="M6 5.8 L1 3.2 Q0.2 6.5 1 9.3 Q3.5 11.8 6 12.2 Z" fill="#595959"/><path d="M8.2 6.3 L10 7.5 L9 9.5 L7.6 8.6 Z" fill="#d9d9d9"/></svg>
<div class="t u" style="left:1393px;top:807px;color:#5a5a5a;font-size:11.6px">Bonzai</div>
<div class="t" style="left:1432px;top:808px;color:#777;font-size:10px;">..,</div>
<svg style="left:1446px;top:810px" width="12" height="13"><path d="M6 0.8 Q8 1 11 3.2 Q11.8 6.5 11 9.3 Q8 11.8 6 12.2 Q3.5 11.8 1 9.3 Q0.2 6.5 1 3.2 Q3.5 1 6 0.8 Z" fill="#6e6e6e"/><path d="M6 0.8 Q8 1 11 3.2 L6 5.8 L1 3.2 Q3.5 1 6 0.8 Z" fill="#a8a8a8"/><path d="M6 5.8 L1 3.2 Q0.2 6.5 1 9.3 Q3.5 11.8 6 12.2 Z" fill="#595959"/><path d="M8.2 6.3 L10 7.5 L9 9.5 L7.6 8.6 Z" fill="#d9d9d9"/></svg>
<div class="t u" style="left:1458px;top:807px;color:#5a5a5a;font-size:11.6px">Dash...</div>
</body></html>
